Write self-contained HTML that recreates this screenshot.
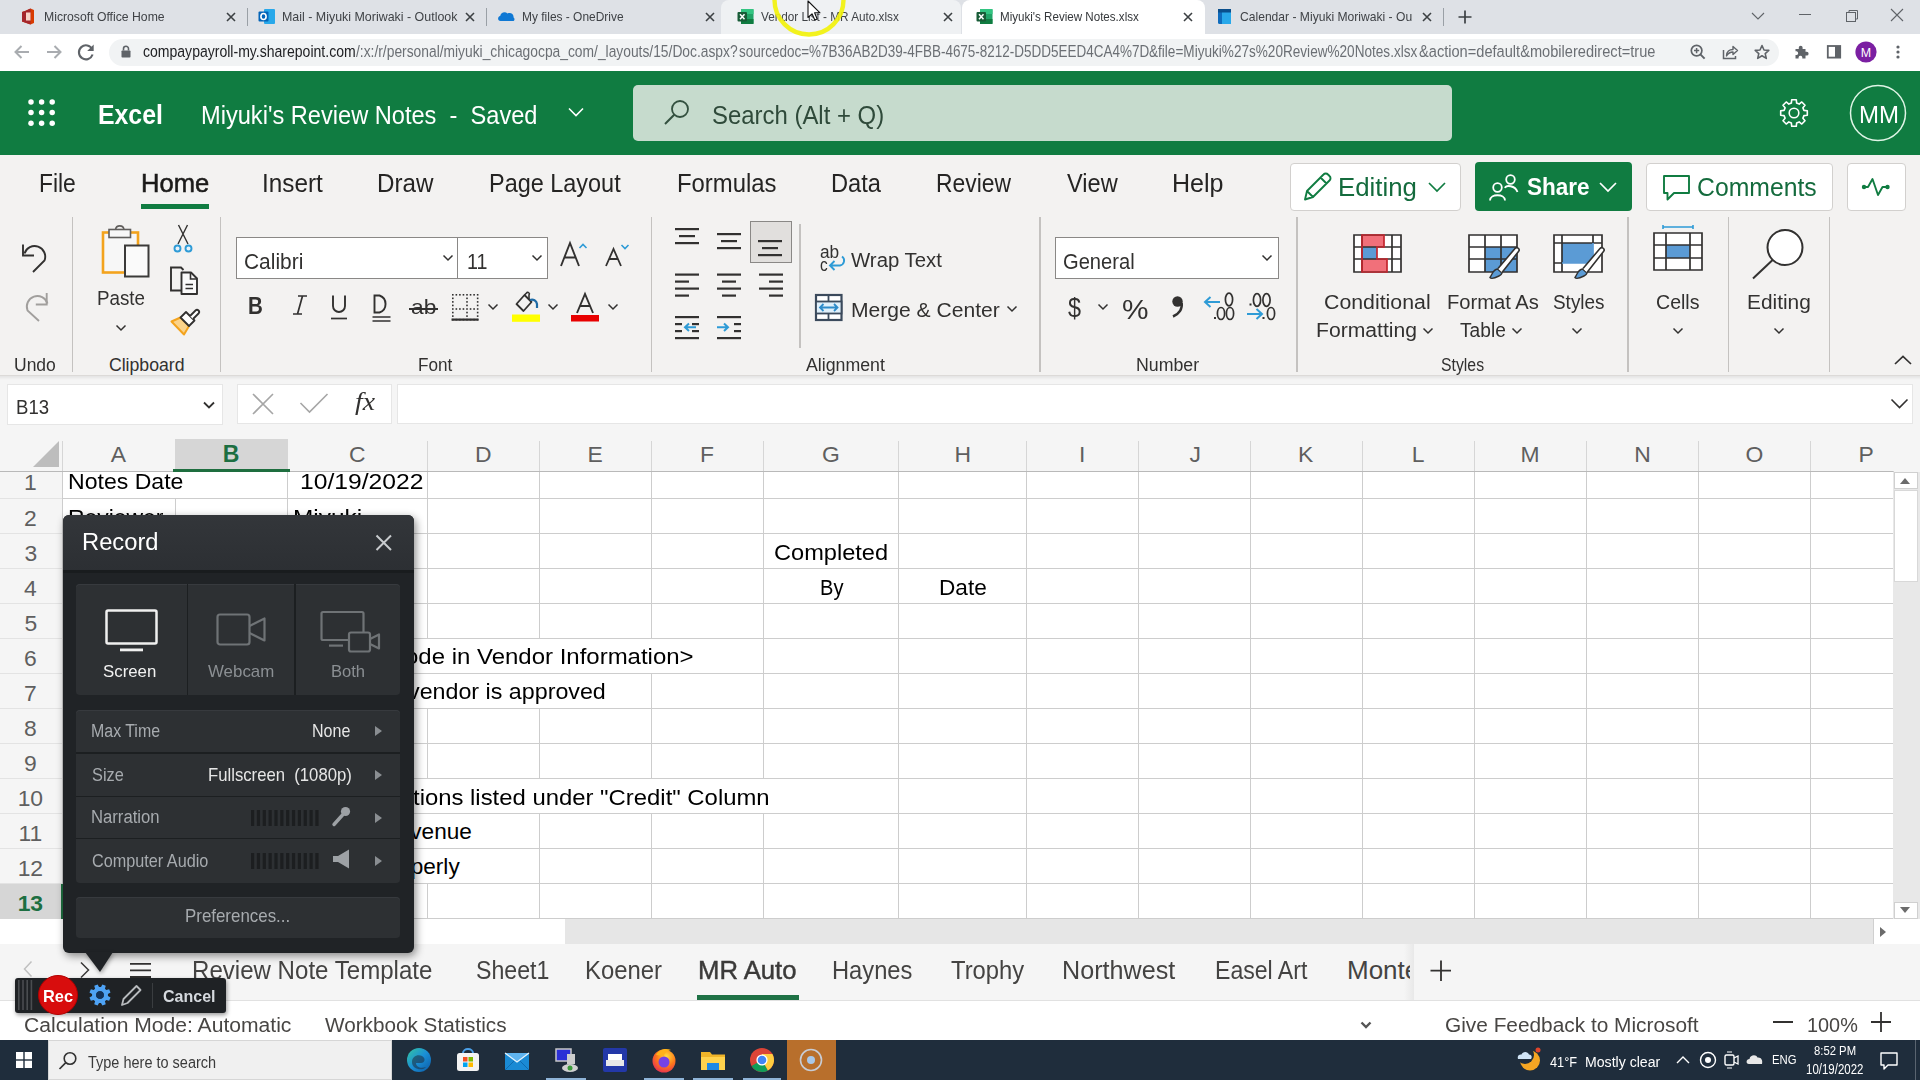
<!DOCTYPE html>
<html><head><meta charset="utf-8"><style>
html,body{margin:0;padding:0;width:1920px;height:1080px;overflow:hidden;background:#fff;font-family:"Liberation Sans",sans-serif;}
.a{position:absolute;}
.t{position:absolute;white-space:nowrap;line-height:1;transform-origin:0 0;font-family:"Liberation Sans",sans-serif;z-index:2;}
svg{position:absolute;overflow:visible;}

</style></head><body>
<div class="a" style="left:0px;top:0px;width:1920px;height:34px;background:#dee1e6;"></div>
<div class="a" style="left:721px;top:0;width:240px;height:34px;background:#eff1f3;border-radius:8px 8px 0 0"></div>
<div class="a" style="left:962px;top:0;width:243px;height:34px;background:#ffffff;border-radius:8px 8px 0 0"></div>
<div class="a" style="left:0px;top:34px;width:1920px;height:36.5px;background:#ffffff;"></div>
<div class="a" style="left:109px;top:38.5px;width:1670px;height:27px;background:#f1f3f4;border-radius:14px"></div>
<div class="a" style="left:0px;top:70.5px;width:1920px;height:84.5px;background:#107c41;"></div>
<div class="a" style="left:633px;top:85px;width:819px;height:55.5px;background:#c6dbcd;border-radius:5px"></div>
<div class="a" style="left:0px;top:155px;width:1920px;height:221px;background:#f3f2f1;"></div>
<div class="a" style="left:0px;top:376px;width:1920px;height:61px;background:#f5f5f5;"></div>
<div class="a" style="left:0px;top:375px;width:1920px;height:1px;background:#dcdad8;"></div>
<div class="a" style="left:0;top:376px;width:1920px;height:4px;background:linear-gradient(rgba(0,0,0,0.07),rgba(0,0,0,0))"></div>
<div class="a" style="left:7px;top:383.5px;width:216px;height:41px;background:#fff;border:1px solid #e6e6e6;box-sizing:border-box"></div>
<div class="a" style="left:237px;top:383.5px;width:154.5px;height:40.5px;background:#fff;border:1px solid #e6e6e6;box-sizing:border-box"></div>
<div class="a" style="left:397px;top:383.5px;width:1516px;height:40.5px;background:#fff;border:1px solid #e6e6e6;box-sizing:border-box"></div>
<div class="a" style="left:0px;top:437px;width:1920px;height:482px;background:#f5f5f5;"></div>
<div class="a" style="left:62px;top:471.5px;width:1831px;height:447px;background:#ffffff;"></div>
<svg style="left:0;top:0" width="1920" height="1080"><rect x="62" y="471" width="1831" height="1" fill="#cdcdcd"/><rect x="62" y="498" width="1831" height="1" fill="#cdcdcd"/><rect x="62" y="533" width="1831" height="1" fill="#cdcdcd"/><rect x="62" y="568" width="1831" height="1" fill="#cdcdcd"/><rect x="62" y="603" width="1831" height="1" fill="#cdcdcd"/><rect x="62" y="638" width="1831" height="1" fill="#cdcdcd"/><rect x="62" y="673" width="1831" height="1" fill="#cdcdcd"/><rect x="62" y="708" width="1831" height="1" fill="#cdcdcd"/><rect x="62" y="743" width="1831" height="1" fill="#cdcdcd"/><rect x="62" y="778" width="1831" height="1" fill="#cdcdcd"/><rect x="62" y="813" width="1831" height="1" fill="#cdcdcd"/><rect x="62" y="848" width="1831" height="1" fill="#cdcdcd"/><rect x="62" y="883" width="1831" height="1" fill="#cdcdcd"/><rect x="62" y="918" width="1831" height="1" fill="#cdcdcd"/><rect x="0" y="498" width="62" height="1" fill="#e3e3e3"/><rect x="0" y="533" width="62" height="1" fill="#e3e3e3"/><rect x="0" y="568" width="62" height="1" fill="#e3e3e3"/><rect x="0" y="603" width="62" height="1" fill="#e3e3e3"/><rect x="0" y="638" width="62" height="1" fill="#e3e3e3"/><rect x="0" y="673" width="62" height="1" fill="#e3e3e3"/><rect x="0" y="708" width="62" height="1" fill="#e3e3e3"/><rect x="0" y="743" width="62" height="1" fill="#e3e3e3"/><rect x="0" y="778" width="62" height="1" fill="#e3e3e3"/><rect x="0" y="813" width="62" height="1" fill="#e3e3e3"/><rect x="0" y="848" width="62" height="1" fill="#e3e3e3"/><rect x="0" y="883" width="62" height="1" fill="#e3e3e3"/><rect x="0" y="918" width="62" height="1" fill="#e3e3e3"/><rect x="62" y="471" width="1" height="27" fill="#cdcdcd"/><rect x="62" y="498" width="1" height="35" fill="#cdcdcd"/><rect x="62" y="533" width="1" height="35" fill="#cdcdcd"/><rect x="62" y="568" width="1" height="35" fill="#cdcdcd"/><rect x="62" y="603" width="1" height="35" fill="#cdcdcd"/><rect x="62" y="638" width="1" height="35" fill="#cdcdcd"/><rect x="62" y="673" width="1" height="35" fill="#cdcdcd"/><rect x="62" y="708" width="1" height="35" fill="#cdcdcd"/><rect x="62" y="743" width="1" height="35" fill="#cdcdcd"/><rect x="62" y="778" width="1" height="35" fill="#cdcdcd"/><rect x="62" y="813" width="1" height="35" fill="#cdcdcd"/><rect x="62" y="848" width="1" height="35" fill="#cdcdcd"/><rect x="62" y="883" width="1" height="35" fill="#cdcdcd"/><rect x="175" y="498" width="1" height="35" fill="#cdcdcd"/><rect x="175" y="533" width="1" height="35" fill="#cdcdcd"/><rect x="175" y="568" width="1" height="35" fill="#cdcdcd"/><rect x="175" y="603" width="1" height="35" fill="#cdcdcd"/><rect x="175" y="708" width="1" height="35" fill="#cdcdcd"/><rect x="175" y="743" width="1" height="35" fill="#cdcdcd"/><rect x="175" y="883" width="1" height="35" fill="#cdcdcd"/><rect x="287" y="471" width="1" height="27" fill="#cdcdcd"/><rect x="287" y="498" width="1" height="35" fill="#cdcdcd"/><rect x="287" y="533" width="1" height="35" fill="#cdcdcd"/><rect x="287" y="568" width="1" height="35" fill="#cdcdcd"/><rect x="287" y="603" width="1" height="35" fill="#cdcdcd"/><rect x="287" y="708" width="1" height="35" fill="#cdcdcd"/><rect x="287" y="743" width="1" height="35" fill="#cdcdcd"/><rect x="287" y="883" width="1" height="35" fill="#cdcdcd"/><rect x="427" y="471" width="1" height="27" fill="#cdcdcd"/><rect x="427" y="498" width="1" height="35" fill="#cdcdcd"/><rect x="427" y="533" width="1" height="35" fill="#cdcdcd"/><rect x="427" y="568" width="1" height="35" fill="#cdcdcd"/><rect x="427" y="603" width="1" height="35" fill="#cdcdcd"/><rect x="427" y="708" width="1" height="35" fill="#cdcdcd"/><rect x="427" y="743" width="1" height="35" fill="#cdcdcd"/><rect x="427" y="883" width="1" height="35" fill="#cdcdcd"/><rect x="539" y="471" width="1" height="27" fill="#cdcdcd"/><rect x="539" y="498" width="1" height="35" fill="#cdcdcd"/><rect x="539" y="533" width="1" height="35" fill="#cdcdcd"/><rect x="539" y="568" width="1" height="35" fill="#cdcdcd"/><rect x="539" y="603" width="1" height="35" fill="#cdcdcd"/><rect x="539" y="708" width="1" height="35" fill="#cdcdcd"/><rect x="539" y="743" width="1" height="35" fill="#cdcdcd"/><rect x="539" y="813" width="1" height="35" fill="#cdcdcd"/><rect x="539" y="848" width="1" height="35" fill="#cdcdcd"/><rect x="539" y="883" width="1" height="35" fill="#cdcdcd"/><rect x="651" y="471" width="1" height="27" fill="#cdcdcd"/><rect x="651" y="498" width="1" height="35" fill="#cdcdcd"/><rect x="651" y="533" width="1" height="35" fill="#cdcdcd"/><rect x="651" y="568" width="1" height="35" fill="#cdcdcd"/><rect x="651" y="603" width="1" height="35" fill="#cdcdcd"/><rect x="651" y="673" width="1" height="35" fill="#cdcdcd"/><rect x="651" y="708" width="1" height="35" fill="#cdcdcd"/><rect x="651" y="743" width="1" height="35" fill="#cdcdcd"/><rect x="651" y="813" width="1" height="35" fill="#cdcdcd"/><rect x="651" y="848" width="1" height="35" fill="#cdcdcd"/><rect x="651" y="883" width="1" height="35" fill="#cdcdcd"/><rect x="763" y="471" width="1" height="27" fill="#cdcdcd"/><rect x="763" y="498" width="1" height="35" fill="#cdcdcd"/><rect x="763" y="533" width="1" height="35" fill="#cdcdcd"/><rect x="763" y="568" width="1" height="35" fill="#cdcdcd"/><rect x="763" y="603" width="1" height="35" fill="#cdcdcd"/><rect x="763" y="638" width="1" height="35" fill="#cdcdcd"/><rect x="763" y="673" width="1" height="35" fill="#cdcdcd"/><rect x="763" y="708" width="1" height="35" fill="#cdcdcd"/><rect x="763" y="743" width="1" height="35" fill="#cdcdcd"/><rect x="763" y="813" width="1" height="35" fill="#cdcdcd"/><rect x="763" y="848" width="1" height="35" fill="#cdcdcd"/><rect x="763" y="883" width="1" height="35" fill="#cdcdcd"/><rect x="898" y="471" width="1" height="27" fill="#cdcdcd"/><rect x="898" y="498" width="1" height="35" fill="#cdcdcd"/><rect x="898" y="533" width="1" height="35" fill="#cdcdcd"/><rect x="898" y="568" width="1" height="35" fill="#cdcdcd"/><rect x="898" y="603" width="1" height="35" fill="#cdcdcd"/><rect x="898" y="638" width="1" height="35" fill="#cdcdcd"/><rect x="898" y="673" width="1" height="35" fill="#cdcdcd"/><rect x="898" y="708" width="1" height="35" fill="#cdcdcd"/><rect x="898" y="743" width="1" height="35" fill="#cdcdcd"/><rect x="898" y="778" width="1" height="35" fill="#cdcdcd"/><rect x="898" y="813" width="1" height="35" fill="#cdcdcd"/><rect x="898" y="848" width="1" height="35" fill="#cdcdcd"/><rect x="898" y="883" width="1" height="35" fill="#cdcdcd"/><rect x="1026" y="471" width="1" height="27" fill="#cdcdcd"/><rect x="1026" y="498" width="1" height="35" fill="#cdcdcd"/><rect x="1026" y="533" width="1" height="35" fill="#cdcdcd"/><rect x="1026" y="568" width="1" height="35" fill="#cdcdcd"/><rect x="1026" y="603" width="1" height="35" fill="#cdcdcd"/><rect x="1026" y="638" width="1" height="35" fill="#cdcdcd"/><rect x="1026" y="673" width="1" height="35" fill="#cdcdcd"/><rect x="1026" y="708" width="1" height="35" fill="#cdcdcd"/><rect x="1026" y="743" width="1" height="35" fill="#cdcdcd"/><rect x="1026" y="778" width="1" height="35" fill="#cdcdcd"/><rect x="1026" y="813" width="1" height="35" fill="#cdcdcd"/><rect x="1026" y="848" width="1" height="35" fill="#cdcdcd"/><rect x="1026" y="883" width="1" height="35" fill="#cdcdcd"/><rect x="1138" y="471" width="1" height="27" fill="#cdcdcd"/><rect x="1138" y="498" width="1" height="35" fill="#cdcdcd"/><rect x="1138" y="533" width="1" height="35" fill="#cdcdcd"/><rect x="1138" y="568" width="1" height="35" fill="#cdcdcd"/><rect x="1138" y="603" width="1" height="35" fill="#cdcdcd"/><rect x="1138" y="638" width="1" height="35" fill="#cdcdcd"/><rect x="1138" y="673" width="1" height="35" fill="#cdcdcd"/><rect x="1138" y="708" width="1" height="35" fill="#cdcdcd"/><rect x="1138" y="743" width="1" height="35" fill="#cdcdcd"/><rect x="1138" y="778" width="1" height="35" fill="#cdcdcd"/><rect x="1138" y="813" width="1" height="35" fill="#cdcdcd"/><rect x="1138" y="848" width="1" height="35" fill="#cdcdcd"/><rect x="1138" y="883" width="1" height="35" fill="#cdcdcd"/><rect x="1250" y="471" width="1" height="27" fill="#cdcdcd"/><rect x="1250" y="498" width="1" height="35" fill="#cdcdcd"/><rect x="1250" y="533" width="1" height="35" fill="#cdcdcd"/><rect x="1250" y="568" width="1" height="35" fill="#cdcdcd"/><rect x="1250" y="603" width="1" height="35" fill="#cdcdcd"/><rect x="1250" y="638" width="1" height="35" fill="#cdcdcd"/><rect x="1250" y="673" width="1" height="35" fill="#cdcdcd"/><rect x="1250" y="708" width="1" height="35" fill="#cdcdcd"/><rect x="1250" y="743" width="1" height="35" fill="#cdcdcd"/><rect x="1250" y="778" width="1" height="35" fill="#cdcdcd"/><rect x="1250" y="813" width="1" height="35" fill="#cdcdcd"/><rect x="1250" y="848" width="1" height="35" fill="#cdcdcd"/><rect x="1250" y="883" width="1" height="35" fill="#cdcdcd"/><rect x="1362" y="471" width="1" height="27" fill="#cdcdcd"/><rect x="1362" y="498" width="1" height="35" fill="#cdcdcd"/><rect x="1362" y="533" width="1" height="35" fill="#cdcdcd"/><rect x="1362" y="568" width="1" height="35" fill="#cdcdcd"/><rect x="1362" y="603" width="1" height="35" fill="#cdcdcd"/><rect x="1362" y="638" width="1" height="35" fill="#cdcdcd"/><rect x="1362" y="673" width="1" height="35" fill="#cdcdcd"/><rect x="1362" y="708" width="1" height="35" fill="#cdcdcd"/><rect x="1362" y="743" width="1" height="35" fill="#cdcdcd"/><rect x="1362" y="778" width="1" height="35" fill="#cdcdcd"/><rect x="1362" y="813" width="1" height="35" fill="#cdcdcd"/><rect x="1362" y="848" width="1" height="35" fill="#cdcdcd"/><rect x="1362" y="883" width="1" height="35" fill="#cdcdcd"/><rect x="1474" y="471" width="1" height="27" fill="#cdcdcd"/><rect x="1474" y="498" width="1" height="35" fill="#cdcdcd"/><rect x="1474" y="533" width="1" height="35" fill="#cdcdcd"/><rect x="1474" y="568" width="1" height="35" fill="#cdcdcd"/><rect x="1474" y="603" width="1" height="35" fill="#cdcdcd"/><rect x="1474" y="638" width="1" height="35" fill="#cdcdcd"/><rect x="1474" y="673" width="1" height="35" fill="#cdcdcd"/><rect x="1474" y="708" width="1" height="35" fill="#cdcdcd"/><rect x="1474" y="743" width="1" height="35" fill="#cdcdcd"/><rect x="1474" y="778" width="1" height="35" fill="#cdcdcd"/><rect x="1474" y="813" width="1" height="35" fill="#cdcdcd"/><rect x="1474" y="848" width="1" height="35" fill="#cdcdcd"/><rect x="1474" y="883" width="1" height="35" fill="#cdcdcd"/><rect x="1586" y="471" width="1" height="27" fill="#cdcdcd"/><rect x="1586" y="498" width="1" height="35" fill="#cdcdcd"/><rect x="1586" y="533" width="1" height="35" fill="#cdcdcd"/><rect x="1586" y="568" width="1" height="35" fill="#cdcdcd"/><rect x="1586" y="603" width="1" height="35" fill="#cdcdcd"/><rect x="1586" y="638" width="1" height="35" fill="#cdcdcd"/><rect x="1586" y="673" width="1" height="35" fill="#cdcdcd"/><rect x="1586" y="708" width="1" height="35" fill="#cdcdcd"/><rect x="1586" y="743" width="1" height="35" fill="#cdcdcd"/><rect x="1586" y="778" width="1" height="35" fill="#cdcdcd"/><rect x="1586" y="813" width="1" height="35" fill="#cdcdcd"/><rect x="1586" y="848" width="1" height="35" fill="#cdcdcd"/><rect x="1586" y="883" width="1" height="35" fill="#cdcdcd"/><rect x="1698" y="471" width="1" height="27" fill="#cdcdcd"/><rect x="1698" y="498" width="1" height="35" fill="#cdcdcd"/><rect x="1698" y="533" width="1" height="35" fill="#cdcdcd"/><rect x="1698" y="568" width="1" height="35" fill="#cdcdcd"/><rect x="1698" y="603" width="1" height="35" fill="#cdcdcd"/><rect x="1698" y="638" width="1" height="35" fill="#cdcdcd"/><rect x="1698" y="673" width="1" height="35" fill="#cdcdcd"/><rect x="1698" y="708" width="1" height="35" fill="#cdcdcd"/><rect x="1698" y="743" width="1" height="35" fill="#cdcdcd"/><rect x="1698" y="778" width="1" height="35" fill="#cdcdcd"/><rect x="1698" y="813" width="1" height="35" fill="#cdcdcd"/><rect x="1698" y="848" width="1" height="35" fill="#cdcdcd"/><rect x="1698" y="883" width="1" height="35" fill="#cdcdcd"/><rect x="1810" y="471" width="1" height="27" fill="#cdcdcd"/><rect x="1810" y="498" width="1" height="35" fill="#cdcdcd"/><rect x="1810" y="533" width="1" height="35" fill="#cdcdcd"/><rect x="1810" y="568" width="1" height="35" fill="#cdcdcd"/><rect x="1810" y="603" width="1" height="35" fill="#cdcdcd"/><rect x="1810" y="638" width="1" height="35" fill="#cdcdcd"/><rect x="1810" y="673" width="1" height="35" fill="#cdcdcd"/><rect x="1810" y="708" width="1" height="35" fill="#cdcdcd"/><rect x="1810" y="743" width="1" height="35" fill="#cdcdcd"/><rect x="1810" y="778" width="1" height="35" fill="#cdcdcd"/><rect x="1810" y="813" width="1" height="35" fill="#cdcdcd"/><rect x="1810" y="848" width="1" height="35" fill="#cdcdcd"/><rect x="1810" y="883" width="1" height="35" fill="#cdcdcd"/><rect x="1893" y="471" width="1" height="27" fill="#cdcdcd"/><rect x="1893" y="498" width="1" height="35" fill="#cdcdcd"/><rect x="1893" y="533" width="1" height="35" fill="#cdcdcd"/><rect x="1893" y="568" width="1" height="35" fill="#cdcdcd"/><rect x="1893" y="603" width="1" height="35" fill="#cdcdcd"/><rect x="1893" y="638" width="1" height="35" fill="#cdcdcd"/><rect x="1893" y="673" width="1" height="35" fill="#cdcdcd"/><rect x="1893" y="708" width="1" height="35" fill="#cdcdcd"/><rect x="1893" y="743" width="1" height="35" fill="#cdcdcd"/><rect x="1893" y="778" width="1" height="35" fill="#cdcdcd"/><rect x="1893" y="813" width="1" height="35" fill="#cdcdcd"/><rect x="1893" y="848" width="1" height="35" fill="#cdcdcd"/><rect x="1893" y="883" width="1" height="35" fill="#cdcdcd"/><rect x="62" y="441" width="1" height="30" fill="#d6d6d6"/><rect x="175" y="441" width="1" height="30" fill="#d6d6d6"/><rect x="287" y="441" width="1" height="30" fill="#d6d6d6"/><rect x="427" y="441" width="1" height="30" fill="#d6d6d6"/><rect x="539" y="441" width="1" height="30" fill="#d6d6d6"/><rect x="651" y="441" width="1" height="30" fill="#d6d6d6"/><rect x="763" y="441" width="1" height="30" fill="#d6d6d6"/><rect x="898" y="441" width="1" height="30" fill="#d6d6d6"/><rect x="1026" y="441" width="1" height="30" fill="#d6d6d6"/><rect x="1138" y="441" width="1" height="30" fill="#d6d6d6"/><rect x="1250" y="441" width="1" height="30" fill="#d6d6d6"/><rect x="1362" y="441" width="1" height="30" fill="#d6d6d6"/><rect x="1474" y="441" width="1" height="30" fill="#d6d6d6"/><rect x="1586" y="441" width="1" height="30" fill="#d6d6d6"/><rect x="1698" y="441" width="1" height="30" fill="#d6d6d6"/><rect x="1810" y="441" width="1" height="30" fill="#d6d6d6"/></svg>
<div class="a" style="left:0px;top:471px;width:1893px;height:1.3px;background:#b9b9b9;"></div>
<svg style="left:30px;top:438px;" width="32" height="32" viewBox="0 0 32 32"><path d="M3 29 L29 3 L29 29 Z" fill="#bdbdbd"/></svg>
<div class="a" style="left:175px;top:439px;width:112.5px;height:32.5px;background:#d6d6d6;"></div>
<div class="a" style="left:173px;top:469px;width:117px;height:3px;background:#1e6e3f;"></div>
<div class="a" style="left:0px;top:883.5px;width:62px;height:35px;background:#d6d6d6;"></div>
<div class="a" style="left:60.5px;top:883.5px;width:3px;height:35px;background:#1e6e3f;"></div>
<div class="a" style="left:1893px;top:471.5px;width:27px;height:447px;background:#e8e8e8;"></div>
<div class="a" style="left:1893.5px;top:472px;width:24px;height:17px;background:#fff;border:1px solid #d0d0d0;box-sizing:border-box"></div>
<svg style="left:1897px;top:474px;" width="16" height="12" viewBox="0 0 16 12"><path d="M3 10 L8 4 L13 10 Z" fill="#6b6b6b"/></svg>
<div class="a" style="left:1893.5px;top:490px;width:24px;height:92px;background:#fff;border:1px solid #d8d8d8;box-sizing:border-box"></div>
<div class="a" style="left:1893.5px;top:902px;width:24px;height:17px;background:#fff;border:1px solid #d0d0d0;box-sizing:border-box"></div>
<svg style="left:1897px;top:904px;" width="16" height="12" viewBox="0 0 16 12"><path d="M3 3 L13 3 L8 9 Z" fill="#6b6b6b"/></svg>
<div class="a" style="left:0px;top:919px;width:1920px;height:25px;background:#ffffff;"></div>
<div class="a" style="left:565px;top:919px;width:1318px;height:25px;background:#e6e6e6;"></div>
<div class="a" style="left:1873px;top:919px;width:19px;height:25px;background:#fff;border-left:1px solid #d0d0d0;box-sizing:border-box"></div>
<svg style="left:1876px;top:925px;" width="14" height="14" viewBox="0 0 14 14"><path d="M4 2 L10 7 L4 12 Z" fill="#6b6b6b"/></svg>
<div class="a" style="left:0px;top:944px;width:1920px;height:56px;background:#f5f5f5;"></div>
<div class="a" style="left:0px;top:1000px;width:1920px;height:1px;background:#e1e1e1;"></div>
<div class="a" style="left:697px;top:995px;width:102px;height:5px;background:#1e7145;"></div>
<div class="a" style="left:1404px;top:944px;width:10px;height:56px;background:linear-gradient(90deg,rgba(245,245,245,0),#e8e8e8)"></div>
<div class="a" style="left:0px;top:1001px;width:1920px;height:39px;background:#ffffff;"></div>
<div class="a" style="left:0px;top:1040px;width:1920px;height:40px;background:#1f2d3c;"></div>
<div class="a" style="left:48px;top:1040px;width:344px;height:40px;background:#f0f0f0;border:1px solid #d6d6d6;box-sizing:border-box"></div>
<div class="a" style="left:787px;top:1040px;width:49px;height:40px;background:#b86f2c;"></div>
<div class="a" style="z-index:20;left:63px;top:514.5px;width:351px;height:438px;background:#202326;border-radius:6px;box-shadow:2px 3px 8px rgba(0,0,0,0.45);overflow:hidden">
 <div class="a" style="left:0;top:0;width:351px;height:56px;background:linear-gradient(#33363a,#2c2f33);"></div>
 <div class="a" style="left:0;top:55.5px;width:351px;height:2.5px;background:#191c1e;"></div>
 <div class="a" style="left:13px;top:69.5px;width:324px;height:110.5px;background:#2d3033;border-radius:4px;box-shadow:inset 0 1px 0 #373a3e;"></div>
 <div class="a" style="left:123.5px;top:69.5px;width:1.5px;height:110.5px;background:#1c1f21;"></div>
 <div class="a" style="left:231px;top:69.5px;width:1.5px;height:110.5px;background:#1c1f21;"></div>
 <div class="a" style="left:13px;top:195.5px;width:324px;height:172.5px;background:#2d3033;border-radius:4px;box-shadow:inset 0 1px 0 #373a3e;"></div>
 <div class="a" style="left:13px;top:237.5px;width:324px;height:1.5px;background:#1c1f21;"></div>
 <div class="a" style="left:13px;top:281px;width:324px;height:1.5px;background:#1c1f21;"></div>
 <div class="a" style="left:13px;top:323px;width:324px;height:1.5px;background:#1c1f21;"></div>
 <div class="a" style="left:13px;top:382.5px;width:324px;height:40.5px;background:#2d3033;border-radius:4px;box-shadow:inset 0 1px 0 #373a3e;"></div>
</div>
<svg style="left:80px;top:951px;z-index:20;filter:drop-shadow(1px 2px 2px rgba(0,0,0,0.35))" width="40" height="24" viewBox="0 0 40 24"><path d="M5 1 L33 1 L20 21 Z" fill="#202326"/></svg>
<svg style="left:374px;top:533px;z-index:22" width="20" height="20" viewBox="0 0 20 20"><path d="M2.5 2.5 L17 17 M17 2.5 L2.5 17" stroke="#c8cbce" stroke-width="2"/></svg>
<svg style="left:100px;top:605px;z-index:22" width="64" height="50" viewBox="0 0 64 50"><rect x="6.5" y="5.5" width="50" height="33" rx="1.5" fill="none" stroke="#f0f0f0" stroke-width="2.5"/><rect x="20" y="43.5" width="23" height="2.8" fill="#f0f0f0"/></svg>
<svg style="left:210px;top:605px;z-index:22" width="64" height="50" viewBox="0 0 64 50"><rect x="7.5" y="9.5" width="32" height="30" rx="2.5" fill="none" stroke="#6f7376" stroke-width="2.2"/><path d="M39.5 21 L54.5 13.5 L54.5 35.5 L39.5 28" fill="none" stroke="#6f7376" stroke-width="2.2" stroke-linejoin="round"/></svg>
<svg style="left:315px;top:605px;z-index:22" width="70" height="52" viewBox="0 0 70 52"><rect x="6.5" y="7" width="42" height="28" rx="1.5" fill="none" stroke="#6f7376" stroke-width="2.2"/><rect x="14" y="39.5" width="14" height="2.2" fill="#6f7376"/><rect x="34" y="27.5" width="21" height="19" rx="2" fill="#2d3033" stroke="#6f7376" stroke-width="2.2"/><path d="M55 34 L64 29.5 L64 43.5 L55 39" fill="none" stroke="#6f7376" stroke-width="2.2" stroke-linejoin="round"/></svg>
<svg style="left:372px;top:723px;z-index:22" width="14" height="16" viewBox="0 0 14 16"><path d="M3 3 L10 8 L3 13 Z" fill="#8a8e92"/></svg>
<svg style="left:372px;top:767px;z-index:22" width="14" height="16" viewBox="0 0 14 16"><path d="M3 3 L10 8 L3 13 Z" fill="#8a8e92"/></svg>
<svg style="left:372px;top:810px;z-index:22" width="14" height="16" viewBox="0 0 14 16"><path d="M3 3 L10 8 L3 13 Z" fill="#8a8e92"/></svg>
<svg style="left:372px;top:853px;z-index:22" width="14" height="16" viewBox="0 0 14 16"><path d="M3 3 L10 8 L3 13 Z" fill="#8a8e92"/></svg>
<svg style="left:250.5px;top:809.5px;z-index:22" width="72" height="16" viewBox="0 0 72 16"><rect x="0.00" y="0" width="3.2" height="16" fill="#1c1e20"/><rect x="5.85" y="0" width="3.2" height="16" fill="#1c1e20"/><rect x="11.70" y="0" width="3.2" height="16" fill="#1c1e20"/><rect x="17.55" y="0" width="3.2" height="16" fill="#1c1e20"/><rect x="23.40" y="0" width="3.2" height="16" fill="#1c1e20"/><rect x="29.25" y="0" width="3.2" height="16" fill="#1c1e20"/><rect x="35.10" y="0" width="3.2" height="16" fill="#1c1e20"/><rect x="40.95" y="0" width="3.2" height="16" fill="#1c1e20"/><rect x="46.80" y="0" width="3.2" height="16" fill="#1c1e20"/><rect x="52.65" y="0" width="3.2" height="16" fill="#1c1e20"/><rect x="58.50" y="0" width="3.2" height="16" fill="#1c1e20"/><rect x="64.35" y="0" width="3.2" height="16" fill="#1c1e20"/></svg>
<svg style="left:250.5px;top:852.5px;z-index:22" width="72" height="16" viewBox="0 0 72 16"><rect x="0.00" y="0" width="3.2" height="16" fill="#1c1e20"/><rect x="5.85" y="0" width="3.2" height="16" fill="#1c1e20"/><rect x="11.70" y="0" width="3.2" height="16" fill="#1c1e20"/><rect x="17.55" y="0" width="3.2" height="16" fill="#1c1e20"/><rect x="23.40" y="0" width="3.2" height="16" fill="#1c1e20"/><rect x="29.25" y="0" width="3.2" height="16" fill="#1c1e20"/><rect x="35.10" y="0" width="3.2" height="16" fill="#1c1e20"/><rect x="40.95" y="0" width="3.2" height="16" fill="#1c1e20"/><rect x="46.80" y="0" width="3.2" height="16" fill="#1c1e20"/><rect x="52.65" y="0" width="3.2" height="16" fill="#1c1e20"/><rect x="58.50" y="0" width="3.2" height="16" fill="#1c1e20"/><rect x="64.35" y="0" width="3.2" height="16" fill="#1c1e20"/></svg>
<svg style="left:330px;top:805px;z-index:22" width="24" height="24" viewBox="0 0 24 24"><circle cx="15.5" cy="6.5" r="4.6" fill="#9da1a5"/><path d="M12.5 10 L4 19.5" stroke="#9da1a5" stroke-width="3.4" stroke-linecap="round"/></svg>
<svg style="left:330px;top:848px;z-index:22" width="24" height="24" viewBox="0 0 24 24"><path d="M3 8 L8 8 L19 1.5 L19 20.5 L8 14 L3 14 Z" fill="#9da1a5"/></svg>
<div class="a" style="z-index:30;left:15px;top:978px;width:210.5px;height:34.5px;background:#1f2225;border-radius:3px;box-shadow:1px 2px 4px rgba(0,0,0,0.4)"></div>
<svg style="left:15px;top:978px;z-index:31" width="20" height="34" viewBox="0 0 20 34"><rect x="3.0" y="2" width="1.6" height="30" fill="#4a4d50"/><rect x="7.2" y="2" width="1.6" height="30" fill="#4a4d50"/><rect x="11.4" y="2" width="1.6" height="30" fill="#4a4d50"/><rect x="15.6" y="2" width="1.6" height="30" fill="#4a4d50"/></svg>
<svg style="left:36px;top:973px;z-index:31" width="44" height="44" viewBox="0 0 44 44"><circle cx="22" cy="22" r="19.5" fill="#d80d0d"/><circle cx="22" cy="22" r="19.5" fill="none" stroke="#b30000" stroke-width="1"/></svg>
<svg style="left:88px;top:983px;z-index:31" width="24" height="24" viewBox="0 0 24 24"><path d="M19.94 12.98 L22.53 14.39 L21.13 17.76 L18.31 16.92 L16.92 18.31 L17.76 21.13 L14.39 22.53 L12.98 19.94 L11.02 19.94 L9.61 22.53 L6.24 21.13 L7.08 18.31 L5.69 16.92 L2.87 17.76 L1.47 14.39 L4.06 12.98 L4.06 11.02 L1.47 9.61 L2.87 6.24 L5.69 7.08 L7.08 5.69 L6.24 2.87 L9.61 1.47 L11.02 4.06 L12.98 4.06 L14.39 1.47 L17.76 2.87 L16.92 5.69 L18.31 7.08 L21.13 6.24 L22.53 9.61 L19.94 11.02 Z M12 8.2 A3.8 3.8 0 1 0 12 15.8 A3.8 3.8 0 1 0 12 8.2 Z" fill="#4ea3f5" fill-rule="evenodd"/><circle cx="12" cy="12" r="3.8" fill="#12335c"/></svg>
<svg style="left:118px;top:983px;z-index:31" width="26" height="26" viewBox="0 0 26 26"><path d="M4 22 L5.5 16 L18.5 3 L22.5 7 L9.5 20 Z" fill="none" stroke="#b8bbbe" stroke-width="1.8" stroke-linejoin="round"/></svg>
<div class="a" style="left:152px;top:983px;width:1px;height:25px;background:#3a3d40;z-index:31;"></div>
<svg style="left:21px;top:8px;" width="14" height="17" viewBox="0 0 14 17"><path d="M4 3 L9.5 0.5 L13 2 L13 15 L9.5 16.5 L1 13.5 L1 4 Z" fill="#d83b01"/><path d="M4 3 L9.5 0.5 L9.5 16.5 L1 13.5 L1 4 Z" fill="#a4262c"/><rect x="5" y="4.5" width="4.5" height="8" fill="#f7d4c9"/></svg>
<svg style="left:258px;top:8px;" width="18" height="17" viewBox="0 0 18 17"><rect x="6" y="1" width="11" height="15" rx="1" fill="#28a8ea"/><rect x="0.5" y="3.5" width="10" height="10" rx="1" fill="#0364b8"/><ellipse cx="5.5" cy="8.5" rx="2.6" ry="3" fill="none" stroke="#fff" stroke-width="1.6"/></svg>
<svg style="left:497px;top:9px;" width="18" height="14" viewBox="0 0 18 14"><path d="M3.5 12 C0.5 12 0.2 7.5 3.2 7 C3.6 3.5 8 2 10.5 4.5 C13.5 3 17 5 16.5 8.5 C18 9 17.8 12 16 12 Z" fill="#0f78d4"/></svg>
<svg style="left:737px;top:8px;" width="17" height="17" viewBox="0 0 17 17"><rect x="4" y="1" width="12.5" height="15" rx="1" fill="#21a366"/><rect x="4" y="1" width="12.5" height="5" fill="#33c481"/><rect x="4" y="11" width="12.5" height="5" fill="#107c41"/><rect x="0.5" y="4" width="9.5" height="9.5" rx="1" fill="#185c37"/><path d="M3 6.2 L7.5 11.3 M7.5 6.2 L3 11.3" stroke="#fff" stroke-width="1.5"/></svg>
<svg style="left:976px;top:8px;" width="17" height="17" viewBox="0 0 17 17"><rect x="4" y="1" width="12.5" height="15" rx="1" fill="#21a366"/><rect x="4" y="1" width="12.5" height="5" fill="#33c481"/><rect x="4" y="11" width="12.5" height="5" fill="#107c41"/><rect x="0.5" y="4" width="9.5" height="9.5" rx="1" fill="#185c37"/><path d="M3 6.2 L7.5 11.3 M7.5 6.2 L3 11.3" stroke="#fff" stroke-width="1.5"/></svg>
<svg style="left:1216px;top:8px;" width="16" height="17" viewBox="0 0 16 17"><rect x="2" y="1" width="13" height="15" rx="1.5" fill="#0f6cbd"/><rect x="6" y="4" width="9" height="12" fill="#28a8ea"/><rect x="2" y="1" width="13" height="3.5" fill="#0a4f8c"/></svg>
<svg style="left:225px;top:11px;" width="12" height="12" viewBox="0 0 12 12"><path d="M2 2 L10 10 M10 2 L2 10" stroke="#3c4043" stroke-width="1.6"/></svg>
<svg style="left:464px;top:11px;" width="12" height="12" viewBox="0 0 12 12"><path d="M2 2 L10 10 M10 2 L2 10" stroke="#3c4043" stroke-width="1.6"/></svg>
<svg style="left:703.5px;top:11px;" width="12" height="12" viewBox="0 0 12 12"><path d="M2 2 L10 10 M10 2 L2 10" stroke="#3c4043" stroke-width="1.6"/></svg>
<svg style="left:942px;top:11px;" width="12" height="12" viewBox="0 0 12 12"><path d="M2 2 L10 10 M10 2 L2 10" stroke="#3c4043" stroke-width="1.6"/></svg>
<svg style="left:1181.5px;top:11px;" width="12" height="12" viewBox="0 0 12 12"><path d="M2 2 L10 10 M10 2 L2 10" stroke="#3c4043" stroke-width="1.6"/></svg>
<svg style="left:1421px;top:11px;" width="12" height="12" viewBox="0 0 12 12"><path d="M2 2 L10 10 M10 2 L2 10" stroke="#3c4043" stroke-width="1.6"/></svg>
<div class="a" style="left:247px;top:8px;width:1px;height:18px;background:#9aa0a6;"></div>
<div class="a" style="left:486px;top:8px;width:1px;height:18px;background:#9aa0a6;"></div>
<div class="a" style="left:1443px;top:8px;width:1px;height:18px;background:#9aa0a6;"></div>
<svg style="left:1457px;top:9px;" width="16" height="16" viewBox="0 0 16 16"><path d="M8 1.5 L8 14.5 M1.5 8 L14.5 8" stroke="#3c4043" stroke-width="1.7"/></svg>
<svg style="left:1750px;top:9px;" width="16" height="14" viewBox="0 0 16 14"><path d="M2 4 L8 10 L14 4" fill="none" stroke="#5f6368" stroke-width="1.1"/></svg>
<div class="a" style="left:1799px;top:14px;width:12px;height:1px;background:#5f6368;"></div>
<svg style="left:1844px;top:8px;" width="16" height="16" viewBox="0 0 16 16"><rect x="2.5" y="4.5" width="9" height="9" fill="none" stroke="#5f6368" stroke-width="1"/><path d="M5 4.5 L5 2.5 L13.5 2.5 L13.5 11 L11.5 11" fill="none" stroke="#5f6368" stroke-width="1"/></svg>
<svg style="left:1889px;top:7px;" width="16" height="16" viewBox="0 0 16 16"><path d="M2 2 L14 14 M14 2 L2 14" stroke="#5f6368" stroke-width="1.1"/></svg>
<svg style="left:12px;top:42px;" width="20" height="20" viewBox="0 0 20 20"><path d="M17 10 L3.5 10 M9.5 4 L3.5 10 L9.5 16" fill="none" stroke="#a9acb0" stroke-width="2"/></svg>
<svg style="left:44px;top:42px;" width="20" height="20" viewBox="0 0 20 20"><path d="M3 10 L16.5 10 M10.5 4 L16.5 10 L10.5 16" fill="none" stroke="#a9acb0" stroke-width="2"/></svg>
<svg style="left:75px;top:41px;" width="22" height="22" viewBox="0 0 22 22"><path d="M17.2 8.2 A7 7 0 1 0 17.6 13.5" fill="none" stroke="#5f6368" stroke-width="2.1"/><path d="M18.7 3.5 L18.7 10 L12.2 10 Z" fill="#5f6368"/></svg>
<svg style="left:118px;top:44px;" width="16" height="17" viewBox="0 0 16 17"><rect x="3.5" y="6.5" width="9" height="7" rx="0.8" fill="#5f6368"/><path d="M5.5 6.5 L5.5 4.8 A2.5 2.5 0 0 1 10.5 4.8 L10.5 6.5" fill="none" stroke="#5f6368" stroke-width="1.6"/></svg>
<svg style="left:1689px;top:43px;" width="18" height="18" viewBox="0 0 18 18"><circle cx="7.6" cy="7.6" r="5.3" fill="none" stroke="#5f6368" stroke-width="1.7"/><path d="M11.4 11.4 L15.6 15.6" stroke="#5f6368" stroke-width="2"/><path d="M7.6 5 L7.6 10.2 M5 7.6 L10.2 7.6" stroke="#5f6368" stroke-width="1.5"/></svg>
<svg style="left:1721px;top:44px;" width="20" height="17" viewBox="0 0 20 17"><path d="M2.5 6 L2.5 14.5 L14.5 14.5 L14.5 12" fill="none" stroke="#5f6368" stroke-width="1.5"/><path d="M5.5 12 C5.5 7.5 8.5 5.5 12 5.5 L12 2.5 L16.5 6.5 L12 10.5 L12 8 C9 8 7 9.5 5.5 12 Z" fill="none" stroke="#5f6368" stroke-width="1.4" stroke-linejoin="round"/></svg>
<svg style="left:1754px;top:44px;" width="16" height="16" viewBox="0 0 16 16"><path d="M8 1.5 L10 6 L14.8 6.4 L11.2 9.6 L12.3 14.4 L8 11.8 L3.7 14.4 L4.8 9.6 L1.2 6.4 L6 6 Z" fill="none" stroke="#5f6368" stroke-width="1.6" stroke-linejoin="round"/></svg>
<svg style="left:1794px;top:44px;" width="17" height="16" viewBox="0 0 17 16"><path d="M1.5 5 L4.8 5 L4.8 3.6 A1.9 1.9 0 0 1 8.6 3.6 L8.6 5 L11.5 5 L11.5 7.8 L12.7 7.8 A1.9 1.9 0 0 1 12.7 11.6 L11.5 11.6 L11.5 14.5 L8.3 14.5 L8.3 13.3 A1.9 1.9 0 0 0 4.6 13.3 L4.6 14.5 L1.5 14.5 L1.5 11 L2.7 11 A1.9 1.9 0 0 0 2.7 7.3 L1.5 7.3 Z" fill="#5f6368"/></svg>
<svg style="left:1826px;top:44px;" width="16" height="16" viewBox="0 0 16 16"><rect x="1.8" y="2" width="12.4" height="11.6" fill="none" stroke="#5f6368" stroke-width="1.8"/><rect x="9" y="2" width="5.2" height="11.6" fill="#5f6368"/></svg>
<svg style="left:1855px;top:41px;" width="22" height="22" viewBox="0 0 22 22"><circle cx="11" cy="11" r="10.6" fill="#7b1fa2"/><text x="11" y="15.6" font-family="Liberation Sans" font-size="12.5" fill="#fff" text-anchor="middle">M</text></svg>
<svg style="left:1893px;top:44px;" width="10" height="16" viewBox="0 0 10 16"><circle cx="5" cy="3" r="1.6" fill="#5f6368"/><circle cx="5" cy="8" r="1.6" fill="#5f6368"/><circle cx="5" cy="13" r="1.6" fill="#5f6368"/></svg>
<svg style="left:760px;top:-50px;z-index:40" width="100" height="100" viewBox="0 0 100 100"><circle cx="49" cy="50" r="34.5" fill="none" stroke="#f2f20c" stroke-width="4.4" opacity="0.92"/></svg>
<svg style="left:806px;top:0px;z-index:41" width="20" height="24" viewBox="0 0 20 24"><path d="M2 1 L2 17.5 L6 13.8 L8.8 20 L11.2 19 L8.6 12.8 L14 12.8 Z" fill="#fff" stroke="#111" stroke-width="1.1" stroke-linejoin="round"/></svg>
<svg style="left:27.6px;top:98.5px;" width="32" height="32" viewBox="0 0 32 32"><circle cx="3.0" cy="3.0" r="2.75" fill="#fff"/><circle cx="3.0" cy="13.6" r="2.75" fill="#fff"/><circle cx="3.0" cy="24.2" r="2.75" fill="#fff"/><circle cx="13.6" cy="3.0" r="2.75" fill="#fff"/><circle cx="13.6" cy="13.6" r="2.75" fill="#fff"/><circle cx="13.6" cy="24.2" r="2.75" fill="#fff"/><circle cx="24.2" cy="3.0" r="2.75" fill="#fff"/><circle cx="24.2" cy="13.6" r="2.75" fill="#fff"/><circle cx="24.2" cy="24.2" r="2.75" fill="#fff"/></svg>
<svg style="left:566px;top:105px;" width="20" height="14" viewBox="0 0 20 14"><path d="M3 3.5 L10 10.5 L17 3.5" fill="none" stroke="#fff" stroke-width="1.6"/></svg>
<svg style="left:662px;top:98px;" width="30" height="30" viewBox="0 0 30 30"><circle cx="18" cy="11" r="8" fill="none" stroke="#33503f" stroke-width="1.8"/><path d="M12.2 16.8 L3 26" stroke="#33503f" stroke-width="2"/></svg>
<svg style="left:1778px;top:97px;" width="32" height="32" viewBox="0 0 32 32"><path d="M25.95 13.35 L29.31 13.72 L29.31 18.28 L25.95 18.65 L24.91 21.17 L27.02 23.79 L23.79 27.02 L21.17 24.91 L18.65 25.95 L18.28 29.31 L13.72 29.31 L13.35 25.95 L10.83 24.91 L8.21 27.02 L4.98 23.79 L7.09 21.17 L6.05 18.65 L2.69 18.28 L2.69 13.72 L6.05 13.35 L7.09 10.83 L4.98 8.21 L8.21 4.98 L10.83 7.09 L13.35 6.05 L13.72 2.69 L18.28 2.69 L18.65 6.05 L21.17 7.09 L23.79 4.98 L27.02 8.21 L24.91 10.83 Z" fill="none" stroke="#fff" stroke-width="1.6" stroke-linejoin="round"/><circle cx="16" cy="16" r="4.8" fill="none" stroke="#fff" stroke-width="1.6"/></svg>
<svg style="left:1848px;top:83px;" width="60" height="60" viewBox="0 0 60 60"><circle cx="30" cy="30" r="27.5" fill="none" stroke="#dff5e6" stroke-width="1.5"/></svg>
<div class="a" style="left:141px;top:204px;width:68px;height:4.5px;background:#107c41;"></div>
<div class="a" style="left:1289.5px;top:162.5px;width:171px;height:48px;background:#fff;border:1px solid #d2d0ce;border-radius:4px;box-sizing:border-box"></div>
<svg style="left:1300px;top:170px;" width="34" height="34" viewBox="0 0 34 34"><path d="M5 29.5 L7 21 L23.5 4.5 A3 3 0 0 1 28 4.5 L29.5 6 A3 3 0 0 1 29.5 10.5 L13 27 Z M20.5 7.5 L26.5 13.5 M7 21 L13 27" fill="none" stroke="#107c41" stroke-width="1.9" stroke-linejoin="round"/></svg>
<svg style="left:1426px;top:178px;" width="22" height="18" viewBox="0 0 22 18"><path d="M3 5 L11 13 L19 5" fill="none" stroke="#107c41" stroke-width="1.7"/></svg>
<div class="a" style="left:1475px;top:162px;width:157px;height:49px;background:#107c41;border-radius:4px"></div>
<svg style="left:1488px;top:172px;" width="34" height="34" viewBox="0 0 34 34"><circle cx="9.5" cy="15.5" r="4.3" fill="none" stroke="#fff" stroke-width="1.8"/><path d="M2 28.5 C2 21.5 17 21.5 17 28.5" fill="none" stroke="#fff" stroke-width="1.8"/><circle cx="22.5" cy="7.5" r="4.3" fill="none" stroke="#fff" stroke-width="1.8"/><path d="M17 16 C18 13 27 13 29.5 20" fill="none" stroke="#fff" stroke-width="1.8"/></svg>
<svg style="left:1597px;top:178px;" width="22" height="18" viewBox="0 0 22 18"><path d="M3 5 L11 13 L19 5" fill="none" stroke="#fff" stroke-width="1.7"/></svg>
<div class="a" style="left:1646px;top:162.5px;width:187px;height:48px;background:#fff;border:1px solid #d2d0ce;border-radius:4px;box-sizing:border-box"></div>
<svg style="left:1660px;top:171px;" width="34" height="34" viewBox="0 0 34 34"><path d="M4 5 L29 5 L29 22 L14 22 L7.5 28.5 L7.5 22 L4 22 Z" fill="none" stroke="#107c41" stroke-width="1.9" stroke-linejoin="round"/></svg>
<div class="a" style="left:1847px;top:162.5px;width:58.5px;height:48px;background:#fff;border:1px solid #d2d0ce;border-radius:4px;box-sizing:border-box"></div>
<svg style="left:1860px;top:172px;" width="32" height="30" viewBox="0 0 32 30"><path d="M2 15 L8 15 L12.5 7 L18 23 L22.5 15 L29 15" fill="none" stroke="#107c41" stroke-width="1.9" stroke-linejoin="round"/><circle cx="4" cy="15" r="2.2" fill="#107c41"/><circle cx="27.5" cy="15" r="2.2" fill="#107c41"/></svg>
<div class="a" style="left:71.7px;top:217px;width:1.8px;height:155px;background:#c4c2c0;"></div>
<div class="a" style="left:219.7px;top:217px;width:1.8px;height:155px;background:#c4c2c0;"></div>
<div class="a" style="left:650.7px;top:217px;width:1.8px;height:155px;background:#c4c2c0;"></div>
<div class="a" style="left:1039.2px;top:217px;width:1.8px;height:155px;background:#c4c2c0;"></div>
<div class="a" style="left:1296.2px;top:217px;width:1.8px;height:155px;background:#c4c2c0;"></div>
<div class="a" style="left:1627.2px;top:217px;width:1.8px;height:155px;background:#c4c2c0;"></div>
<div class="a" style="left:1727.7px;top:217px;width:1.8px;height:155px;background:#c4c2c0;"></div>
<div class="a" style="left:1828.7px;top:217px;width:1.8px;height:155px;background:#c4c2c0;"></div>
<div class="a" style="left:799.2px;top:224px;width:1.8px;height:124px;background:#c4c2c0;"></div>
<svg style="left:18px;top:238px;" width="36" height="40" viewBox="0 0 36 40"><path d="M6.5 15.5 A10.6 10.6 0 1 1 26.5 22.5 L15 34" fill="none" stroke="#323130" stroke-width="1.9"/><path d="M5 6.5 L5 17.5 L16 17.5" fill="none" stroke="#323130" stroke-width="1.9"/></svg>
<svg style="left:18px;top:288px;" width="36" height="40" viewBox="0 0 36 40"><path d="M29.5 15.5 A10.6 10.6 0 1 0 9.5 22.5 L21 33" fill="none" stroke="#a19f9d" stroke-width="1.9"/><path d="M28.7 5 L28.7 16.5 L17.8 16.5" fill="none" stroke="#a19f9d" stroke-width="1.9"/></svg>
<svg style="left:98px;top:222px;" width="56" height="58" viewBox="0 0 56 58"><rect x="5" y="10.5" width="35" height="40" fill="#f7f7f7" stroke="#f3a31d" stroke-width="2.6"/><rect x="11" y="7.5" width="21.5" height="8" fill="#f7f7f7" stroke="#605e5c" stroke-width="1.6"/><path d="M17.5 7.5 A4.3 4.3 0 0 1 26 7.5" fill="none" stroke="#605e5c" stroke-width="1.6"/><rect x="27" y="23.5" width="23.5" height="31" fill="#fafafa" stroke="#3b3a39" stroke-width="2"/></svg>
<svg style="left:114.5px;top:324px;" width="12" height="8" viewBox="0 0 12 8"><path d="M1.5 1.5 L6 6 L10.5 1.5" fill="none" stroke="#323130" stroke-width="1.5"/></svg>
<svg style="left:168px;top:222px;" width="30" height="34" viewBox="0 0 30 34"><path d="M10.5 3 L20 22 M19.5 3 L10 22" stroke="#323130" stroke-width="1.4"/><circle cx="9.5" cy="26.5" r="3" fill="#e6f2fb" stroke="#2e9bd6" stroke-width="1.9"/><circle cx="20.5" cy="26.5" r="3" fill="#e6f2fb" stroke="#2e9bd6" stroke-width="1.9"/></svg>
<svg style="left:166px;top:264px;" width="36" height="34" viewBox="0 0 36 34"><path d="M15 26.5 L5 26.5 L5 3.5 L15 3.5 L17.5 6" fill="none" stroke="#323130" stroke-width="1.9"/><path d="M15.5 8.5 L25 8.5 L31 14.5 L31 30 L15.5 30 Z" fill="#fafafa" stroke="#323130" stroke-width="1.9" stroke-linejoin="round"/><path d="M24.5 8.5 L24.5 15 L31 15" fill="none" stroke="#323130" stroke-width="1.6"/><path d="M19.5 20.5 L27 20.5 M19.5 24.5 L27 24.5" stroke="#323130" stroke-width="1.5"/></svg>
<svg style="left:166px;top:306px;" width="36" height="34" viewBox="0 0 36 34"><path d="M5.5 15.5 L14.5 11.5 L23 20 L18 28.5 Z" fill="#fbd38a" stroke="#f3a31d" stroke-width="2" stroke-linejoin="round"/><path d="M14.5 11.5 L20 6 L28.5 14.5 L23 20 Z" fill="#fff" stroke="#323130" stroke-width="1.8" stroke-linejoin="round"/><path d="M24 10 L29.5 4.5 A2 2 0 0 1 32.5 7.5 L27 13" fill="#fff" stroke="#323130" stroke-width="1.8"/></svg>
<div class="a" style="left:235.5px;top:237px;width:312.5px;height:42px;background:#fff;border:1px solid #8a8886;box-sizing:border-box"></div>
<div class="a" style="left:457px;top:238px;width:1px;height:40px;background:#8a8886;"></div>
<svg style="left:442px;top:254px;" width="12" height="8" viewBox="0 0 12 8"><path d="M1.5 1.5 L6 6 L10.5 1.5" fill="none" stroke="#323130" stroke-width="1.5"/></svg>
<svg style="left:531px;top:254px;" width="12" height="8" viewBox="0 0 12 8"><path d="M1.5 1.5 L6 6 L10.5 1.5" fill="none" stroke="#323130" stroke-width="1.5"/></svg>
<svg style="left:556px;top:240px;" width="34" height="30" viewBox="0 0 34 30"><path d="M5 26 L14 3 L23 26 M8.5 17.5 L19.5 17.5" fill="none" stroke="#323130" stroke-width="1.9"/><path d="M23.5 8 L27 4.5 L30.5 8" fill="none" stroke="#2e9bd6" stroke-width="1.6"/></svg>
<svg style="left:602px;top:240px;" width="30" height="30" viewBox="0 0 30 30"><path d="M4 26 L11.5 9 L19 26 M7 19 L16 19" fill="none" stroke="#323130" stroke-width="1.8"/><path d="M19.5 5 L23 8.5 L26.5 5" fill="none" stroke="#2e9bd6" stroke-width="1.6"/></svg>
<svg style="left:288px;top:292px;" width="22" height="26" viewBox="0 0 22 26"><path d="M10 4 L19 4 M5 22 L14 22 M14.5 4 L9.5 22" fill="none" stroke="#323130" stroke-width="1.7"/></svg>
<svg style="left:326px;top:292px;" width="26" height="34" viewBox="0 0 26 34"><path d="M7 3.5 L7 14 A6 6 0 0 0 19 14 L19 3.5" fill="none" stroke="#323130" stroke-width="1.9"/><path d="M5 26.5 L21 26.5" stroke="#323130" stroke-width="1.7"/></svg>
<svg style="left:368px;top:292px;" width="26" height="34" viewBox="0 0 26 34"><path d="M6.5 3.5 L11.5 3.5 A9 9 0 0 1 11.5 20.5 L6.5 20.5 Z" fill="none" stroke="#323130" stroke-width="1.9"/><path d="M4.5 25 L22.5 25 M4.5 29 L22.5 29" stroke="#323130" stroke-width="1.6"/></svg>
<div class="a" style="left:409px;top:308px;width:29px;height:1.6px;background:#323130;"></div>
<svg style="left:450px;top:292px;" width="30" height="30" viewBox="0 0 30 30"><rect x="2.00" y="2.00" width="1.6" height="1.6" fill="#323130"/><rect x="2.00" y="5.55" width="1.6" height="1.6" fill="#323130"/><rect x="2.00" y="9.10" width="1.6" height="1.6" fill="#323130"/><rect x="2.00" y="12.65" width="1.6" height="1.6" fill="#323130"/><rect x="2.00" y="16.20" width="1.6" height="1.6" fill="#323130"/><rect x="2.00" y="19.75" width="1.6" height="1.6" fill="#323130"/><rect x="2.00" y="23.30" width="1.6" height="1.6" fill="#323130"/><rect x="2.00" y="26.85" width="1.6" height="1.6" fill="#323130"/><rect x="5.55" y="2.00" width="1.6" height="1.6" fill="#323130"/><rect x="5.55" y="16.20" width="1.6" height="1.6" fill="#323130"/><rect x="5.55" y="26.85" width="1.6" height="1.6" fill="#323130"/><rect x="9.10" y="2.00" width="1.6" height="1.6" fill="#323130"/><rect x="9.10" y="16.20" width="1.6" height="1.6" fill="#323130"/><rect x="9.10" y="26.85" width="1.6" height="1.6" fill="#323130"/><rect x="12.65" y="2.00" width="1.6" height="1.6" fill="#323130"/><rect x="12.65" y="16.20" width="1.6" height="1.6" fill="#323130"/><rect x="12.65" y="26.85" width="1.6" height="1.6" fill="#323130"/><rect x="16.20" y="2.00" width="1.6" height="1.6" fill="#323130"/><rect x="16.20" y="5.55" width="1.6" height="1.6" fill="#323130"/><rect x="16.20" y="9.10" width="1.6" height="1.6" fill="#323130"/><rect x="16.20" y="12.65" width="1.6" height="1.6" fill="#323130"/><rect x="16.20" y="16.20" width="1.6" height="1.6" fill="#323130"/><rect x="16.20" y="19.75" width="1.6" height="1.6" fill="#323130"/><rect x="16.20" y="23.30" width="1.6" height="1.6" fill="#323130"/><rect x="16.20" y="26.85" width="1.6" height="1.6" fill="#323130"/><rect x="19.75" y="2.00" width="1.6" height="1.6" fill="#323130"/><rect x="19.75" y="16.20" width="1.6" height="1.6" fill="#323130"/><rect x="19.75" y="26.85" width="1.6" height="1.6" fill="#323130"/><rect x="23.30" y="2.00" width="1.6" height="1.6" fill="#323130"/><rect x="23.30" y="16.20" width="1.6" height="1.6" fill="#323130"/><rect x="23.30" y="26.85" width="1.6" height="1.6" fill="#323130"/><rect x="26.85" y="2.00" width="1.6" height="1.6" fill="#323130"/><rect x="26.85" y="5.55" width="1.6" height="1.6" fill="#323130"/><rect x="26.85" y="9.10" width="1.6" height="1.6" fill="#323130"/><rect x="26.85" y="12.65" width="1.6" height="1.6" fill="#323130"/><rect x="26.85" y="16.20" width="1.6" height="1.6" fill="#323130"/><rect x="26.85" y="19.75" width="1.6" height="1.6" fill="#323130"/><rect x="26.85" y="23.30" width="1.6" height="1.6" fill="#323130"/><rect x="26.85" y="26.85" width="1.6" height="1.6" fill="#323130"/><rect x="1.5" y="26.5" width="27" height="2.2" fill="#323130"/></svg>
<svg style="left:487px;top:303px;" width="12" height="8" viewBox="0 0 12 8"><path d="M1.5 1.5 L6 6 L10.5 1.5" fill="none" stroke="#323130" stroke-width="1.5"/></svg>
<svg style="left:509px;top:290px;" width="34" height="34" viewBox="0 0 34 34"><path d="M7.5 14 L15.5 5 L22.5 12 L14.5 21 Z" fill="none" stroke="#323130" stroke-width="1.8" stroke-linejoin="round"/><path d="M15.5 5 L17.5 3 A1.5 1.5 0 0 1 20 5 L20 9.5" fill="none" stroke="#323130" stroke-width="1.6"/><path d="M21 10 A5 5 0 0 1 28 14 L28 18" fill="none" stroke="#1d6aa5" stroke-width="2.2"/><rect x="3" y="24.5" width="28" height="7.3" fill="#ffff00"/></svg>
<svg style="left:547px;top:303px;" width="12" height="8" viewBox="0 0 12 8"><path d="M1.5 1.5 L6 6 L10.5 1.5" fill="none" stroke="#323130" stroke-width="1.5"/></svg>
<svg style="left:568px;top:290px;" width="34" height="34" viewBox="0 0 34 34"><path d="M9 23 L17 4 L25 23 M12 16 L22 16" fill="none" stroke="#323130" stroke-width="1.9"/><rect x="3" y="25" width="28" height="6.5" fill="#e80000"/></svg>
<svg style="left:606.5px;top:303px;" width="12" height="8" viewBox="0 0 12 8"><path d="M1.5 1.5 L6 6 L10.5 1.5" fill="none" stroke="#323130" stroke-width="1.5"/></svg>
<svg style="left:672px;top:225px;" width="30" height="30" viewBox="0 0 30 30"><rect x="3" y="3" width="24" height="2.2" fill="#323130"/><rect x="7" y="10" width="16" height="2.2" fill="#323130"/><rect x="3" y="17" width="24" height="2.2" fill="#323130"/></svg>
<svg style="left:714px;top:230px;" width="30" height="30" viewBox="0 0 30 30"><rect x="3" y="3" width="24" height="2.2" fill="#323130"/><rect x="7" y="10" width="16" height="2.2" fill="#323130"/><rect x="3" y="17" width="24" height="2.2" fill="#323130"/></svg>
<div class="a" style="left:750px;top:221px;width:42px;height:42px;background:#e1dfdd;border:1px solid #8a8886;box-sizing:border-box"></div>
<svg style="left:755px;top:237px;" width="30" height="30" viewBox="0 0 30 30"><rect x="3" y="3" width="24" height="2.2" fill="#323130"/><rect x="7" y="10" width="16" height="2.2" fill="#323130"/><rect x="3" y="17" width="24" height="2.2" fill="#323130"/></svg>
<svg style="left:672px;top:271px;" width="30" height="30" viewBox="0 0 30 30"><rect x="3" y="2.5" width="24" height="2.2" fill="#323130"/><rect x="3" y="9.5" width="14" height="2.2" fill="#323130"/><rect x="3" y="16.5" width="24" height="2.2" fill="#323130"/><rect x="3" y="23.5" width="14" height="2.2" fill="#323130"/></svg>
<svg style="left:714px;top:271px;" width="30" height="30" viewBox="0 0 30 30"><rect x="3" y="2.5" width="24" height="2.2" fill="#323130"/><rect x="8" y="9.5" width="14" height="2.2" fill="#323130"/><rect x="3" y="16.5" width="24" height="2.2" fill="#323130"/><rect x="8" y="23.5" width="14" height="2.2" fill="#323130"/></svg>
<svg style="left:756px;top:271px;" width="30" height="30" viewBox="0 0 30 30"><rect x="3" y="2.5" width="24" height="2.2" fill="#323130"/><rect x="13" y="9.5" width="14" height="2.2" fill="#323130"/><rect x="3" y="16.5" width="24" height="2.2" fill="#323130"/><rect x="13" y="23.5" width="14" height="2.2" fill="#323130"/></svg>
<svg style="left:672px;top:313px;" width="30" height="30" viewBox="0 0 30 30"><rect x="3" y="3" width="24" height="2.2" fill="#323130"/><rect x="3" y="10" width="7" height="2.2" fill="#323130"/><rect x="3" y="17" width="7" height="2.2" fill="#323130"/><rect x="3" y="24" width="24" height="2.2" fill="#323130"/><rect x="20" y="10" width="7" height="2.2" fill="#323130"/><rect x="20" y="17" width="7" height="2.2" fill="#323130"/><path d="M13 14.2 L24 14.2 M17 10.5 L13 14.2 L17 18" fill="none" stroke="#2e9bd6" stroke-width="2"/></svg>
<svg style="left:714px;top:313px;" width="30" height="30" viewBox="0 0 30 30"><rect x="3" y="3" width="24" height="2.2" fill="#323130"/><rect x="20" y="10" width="7" height="2.2" fill="#323130"/><rect x="20" y="17" width="7" height="2.2" fill="#323130"/><rect x="3" y="24" width="24" height="2.2" fill="#323130"/><path d="M3 14.2 L14 14.2 M10 10.5 L14 14.2 L10 18" fill="none" stroke="#2e9bd6" stroke-width="2"/></svg>
<svg style="left:826px;top:255px;" width="20" height="20" viewBox="0 0 20 20"><path d="M16 1.5 A5 5 0 0 1 14 10.5 L4 10.5 M8.5 6 L4 10.5 L8.5 15" fill="none" stroke="#2e9bd6" stroke-width="1.9"/></svg>
<svg style="left:813px;top:292px;" width="32" height="30" viewBox="0 0 32 30"><rect x="3" y="3" width="25.5" height="25" fill="#fff" stroke="#3b4a5c" stroke-width="2.2"/><rect x="3" y="9.5" width="25.5" height="12" fill="#dff0fb" stroke="#3b4a5c" stroke-width="1.8"/><path d="M15.5 3 L15.5 9.5 M15.5 21.5 L15.5 28" stroke="#3b4a5c" stroke-width="1.8"/><path d="M7 15.5 L24.5 15.5 M10.5 12 L7 15.5 L10.5 19 M21 12 L24.5 15.5 L21 19" fill="none" stroke="#2e8bc9" stroke-width="1.8"/></svg>
<svg style="left:1006px;top:305px;" width="12" height="8" viewBox="0 0 12 8"><path d="M1.5 1.5 L6 6 L10.5 1.5" fill="none" stroke="#323130" stroke-width="1.5"/></svg>
<div class="a" style="left:1055px;top:237px;width:224px;height:42px;background:#fff;border:1px solid #8a8886;box-sizing:border-box"></div>
<svg style="left:1261px;top:254px;" width="12" height="8" viewBox="0 0 12 8"><path d="M1.5 1.5 L6 6 L10.5 1.5" fill="none" stroke="#323130" stroke-width="1.5"/></svg>
<svg style="left:1097px;top:303px;" width="12" height="8" viewBox="0 0 12 8"><path d="M1.5 1.5 L6 6 L10.5 1.5" fill="none" stroke="#323130" stroke-width="1.5"/></svg>
<svg style="left:1168px;top:292px;" width="20" height="28" viewBox="0 0 20 28"><circle cx="9.5" cy="9.5" r="5.2" fill="#323130"/><path d="M13.6 11 C14.5 17 11 22 5 24.5" fill="none" stroke="#323130" stroke-width="2.6"/></svg>
<svg style="left:1202px;top:290px;" width="34" height="34" viewBox="0 0 34 34"><path d="M3 12 L18 12 M8.5 7 L3 12 L8.5 17" fill="none" stroke="#2e9bd6" stroke-width="2"/><ellipse cx="27" cy="9.5" rx="3.6" ry="6.3" fill="none" stroke="#323130" stroke-width="1.7"/><rect x="12" y="27" width="2" height="2" fill="#323130"/><ellipse cx="19" cy="23.5" rx="3.6" ry="6" fill="none" stroke="#323130" stroke-width="1.7"/><ellipse cx="28" cy="23.5" rx="3.6" ry="6" fill="none" stroke="#323130" stroke-width="1.7"/></svg>
<svg style="left:1244px;top:290px;" width="34" height="34" viewBox="0 0 34 34"><rect x="5.5" y="13.5" width="2" height="2" fill="#323130"/><ellipse cx="13" cy="10" rx="3.6" ry="6.3" fill="none" stroke="#323130" stroke-width="1.7"/><ellipse cx="22.5" cy="10" rx="3.6" ry="6.3" fill="none" stroke="#323130" stroke-width="1.7"/><path d="M3 24 L18 24 M12.5 19 L18 24 L12.5 29" fill="none" stroke="#2e9bd6" stroke-width="2"/><rect x="18.5" y="27" width="2" height="2" fill="#323130"/><ellipse cx="27" cy="23.5" rx="3.6" ry="6" fill="none" stroke="#323130" stroke-width="1.7"/></svg>
<svg style="left:1352.5px;top:233.5px;" width="50" height="40" viewBox="0 0 50 40"><rect x="1" y="1" width="47" height="37" fill="#fff"/><rect x="9" y="1" width="22" height="12" fill="#f1707a"/><rect x="9" y="13" width="15" height="12" fill="#5b9bd5"/><rect x="9" y="25" width="25" height="12" fill="#f1707a"/><path d="M1 1 H48 V38 H1 Z M1 13 H48 M1 25 H48 M9 1 V38 M39 1 V38" fill="none" stroke="#323130" stroke-width="1.7"/><path d="M9 1 H31 V13 H24 V25 H34 V38 H9 Z" fill="none" stroke="#c4262e" stroke-width="1.7"/></svg>
<svg style="left:1421.5px;top:327px;" width="12" height="8" viewBox="0 0 12 8"><path d="M1.5 1.5 L6 6 L10.5 1.5" fill="none" stroke="#323130" stroke-width="1.5"/></svg>
<svg style="left:1468px;top:233.5px;" width="56" height="48" viewBox="0 0 56 48"><rect x="1" y="1" width="48" height="37" fill="#fff"/><rect x="17" y="13" width="32" height="25" fill="#5b9bd5"/><path d="M1 1 H49 V38 H1 Z M1 13 H49 M1 25 H49 M17 1 V38 M33 1 V38" fill="none" stroke="#323130" stroke-width="1.7"/><path d="M31 42 C27 44 23 45 22 43.5 C24.5 40 25 35.5 29.5 35 L34 39 C33.5 40.5 32.5 41.5 31 42 Z" fill="#5b9bd5" stroke="#323130" stroke-width="1.4"/><path d="M30 34.5 L47 14.5 A2.2 2.2 0 0 1 50.5 17.5 L34 38.5" fill="#fff" stroke="#323130" stroke-width="1.6"/></svg>
<svg style="left:1510.5px;top:327px;" width="12" height="8" viewBox="0 0 12 8"><path d="M1.5 1.5 L6 6 L10.5 1.5" fill="none" stroke="#323130" stroke-width="1.5"/></svg>
<svg style="left:1552.5px;top:233.5px;" width="56" height="48" viewBox="0 0 56 48"><rect x="1" y="1" width="48" height="37" fill="#fff"/><rect x="9" y="9" width="31" height="20" fill="#5b9bd5"/><path d="M1 1 H49 V38 H1 Z M1 9 H49 M1 29 H9 M9 1 V38 M40 1 V9" fill="none" stroke="#323130" stroke-width="1.7"/><path d="M40 9 V29 H9" fill="none" stroke="#5b9bd5" stroke-width="1.7"/><path d="M31 42 C27 44 23 45 22 43.5 C24.5 40 25 35.5 29.5 35 L34 39 C33.5 40.5 32.5 41.5 31 42 Z" fill="#5b9bd5" stroke="#323130" stroke-width="1.4"/><path d="M30 34.5 L47 14.5 A2.2 2.2 0 0 1 50.5 17.5 L34 38.5" fill="#fff" stroke="#323130" stroke-width="1.6"/></svg>
<svg style="left:1571px;top:327px;" width="12" height="8" viewBox="0 0 12 8"><path d="M1.5 1.5 L6 6 L10.5 1.5" fill="none" stroke="#323130" stroke-width="1.5"/></svg>
<svg style="left:1653px;top:225px;" width="52" height="48" viewBox="0 0 52 48"><path d="M10 2 H40 M10 0 V4 M40 0 V4" stroke="#2e9bd6" stroke-width="1.6"/><rect x="1" y="8" width="48" height="37" fill="#fff"/><rect x="13" y="20" width="24" height="13" fill="#5b9bd5"/><path d="M1 8 H49 V45 H1 Z M1 20 H49 M1 33 H49 M13 8 V45 M37 8 V45" fill="none" stroke="#323130" stroke-width="1.7"/></svg>
<svg style="left:1671.5px;top:327px;" width="12" height="8" viewBox="0 0 12 8"><path d="M1.5 1.5 L6 6 L10.5 1.5" fill="none" stroke="#323130" stroke-width="1.5"/></svg>
<svg style="left:1744px;top:225px;" width="64" height="60" viewBox="0 0 64 60"><circle cx="41" cy="22.5" r="17.5" fill="#fff" stroke="#323130" stroke-width="2"/><path d="M28.6 34.9 L9 53.5" stroke="#323130" stroke-width="2"/></svg>
<svg style="left:1772.5px;top:327px;" width="12" height="8" viewBox="0 0 12 8"><path d="M1.5 1.5 L6 6 L10.5 1.5" fill="none" stroke="#323130" stroke-width="1.5"/></svg>
<svg style="left:1893px;top:354px;" width="20" height="12" viewBox="0 0 20 12"><path d="M2 10 L10 2.5 L18 10" fill="none" stroke="#323130" stroke-width="1.7"/></svg>
<svg style="left:202px;top:400px;" width="14" height="10" viewBox="0 0 14 10"><path d="M2 2.5 L7 7.5 L12 2.5" fill="none" stroke="#323130" stroke-width="1.8"/></svg>
<svg style="left:250px;top:391px;" width="26" height="26" viewBox="0 0 26 26"><path d="M3 3 L23 23 M23 3 L3 23" stroke="#a6a6a6" stroke-width="1.6"/></svg>
<svg style="left:298px;top:391px;" width="32" height="24" viewBox="0 0 32 24"><path d="M2.5 12 L11.5 21 L29.5 3" fill="none" stroke="#a6a6a6" stroke-width="1.6"/></svg>
<svg style="left:1889px;top:397px;" width="22" height="14" viewBox="0 0 22 14"><path d="M2.5 2.5 L10.5 10.5 L18.5 2.5" fill="none" stroke="#323130" stroke-width="1.6"/></svg>
<svg style="left:20px;top:959px;" width="16" height="20" viewBox="0 0 16 20"><path d="M11.5 2.5 L4.5 10 L11.5 17.5" fill="none" stroke="#c0c0c0" stroke-width="1.5"/></svg>
<svg style="left:77px;top:960px;" width="16" height="20" viewBox="0 0 16 20"><path d="M4 2.5 L11.5 10 L4 17.5" fill="none" stroke="#3b3a39" stroke-width="1.5"/></svg>
<svg style="left:128px;top:960px;" width="26" height="20" viewBox="0 0 26 20"><path d="M2 3.8 H23 M2 10.4 H23 M2 17 H23" stroke="#323130" stroke-width="1.8"/></svg>
<svg style="left:1428px;top:958px;" width="26" height="26" viewBox="0 0 26 26"><path d="M13 2.5 V23 M2.5 12.7 H23" stroke="#323130" stroke-width="1.8"/></svg>
<svg style="left:1358px;top:1018px;" width="16" height="14" viewBox="0 0 16 14"><path d="M3.5 4.5 L8 9 L12.5 4.5" fill="none" stroke="#555" stroke-width="2.4"/></svg>
<div class="a" style="left:1772.5px;top:1020.8px;width:20px;height:1.8px;background:#323130;"></div>
<svg style="left:1869px;top:1010px;" width="24" height="24" viewBox="0 0 24 24"><path d="M12 2 V22 M2 12 H22" stroke="#323130" stroke-width="1.8"/></svg>
<svg style="left:14px;top:1050px;" width="20" height="20" viewBox="0 0 20 20"><rect x="2" y="2" width="7.3" height="7.3" fill="#fff"/><rect x="10.7" y="2" width="7.3" height="7.3" fill="#fff"/><rect x="2" y="10.7" width="7.3" height="7.3" fill="#fff"/><rect x="10.7" y="10.7" width="7.3" height="7.3" fill="#fff"/></svg>
<svg style="left:57px;top:1050px;" width="22" height="22" viewBox="0 0 22 22"><circle cx="13" cy="8.5" r="5.8" fill="none" stroke="#323232" stroke-width="1.6"/><path d="M8.8 12.7 L2.5 19" stroke="#323232" stroke-width="1.7"/></svg>
<svg style="left:406px;top:1047px;" width="26" height="26" viewBox="0 0 26 26"><defs><linearGradient id="eg" x1="0" y1="0" x2="1" y2="1"><stop offset="0" stop-color="#36c6a0"/><stop offset="0.5" stop-color="#1a8fd6"/><stop offset="1" stop-color="#0c59a4"/></linearGradient></defs><circle cx="13" cy="13" r="12" fill="url(#eg)"/><path d="M6 15 C6 9 12 7 16 9 C20 11 19 16 15 16 L10 16 C10 20 15 22 20 20 C17 24 6 23 6 15 Z" fill="#1e2b3a" opacity="0.55"/></svg>
<svg style="left:455px;top:1047px;" width="26" height="26" viewBox="0 0 26 26"><path d="M8 6 A5 4 0 0 1 18 6" fill="none" stroke="#4ba0e8" stroke-width="2"/><rect x="2" y="6" width="22" height="18" rx="2.5" fill="#f3f3f3"/><rect x="8" y="10" width="4.5" height="4.5" fill="#f25022"/><rect x="13.5" y="10" width="4.5" height="4.5" fill="#7fba00"/><rect x="8" y="15.5" width="4.5" height="4.5" fill="#00a4ef"/><rect x="13.5" y="15.5" width="4.5" height="4.5" fill="#ffb900"/></svg>
<svg style="left:504px;top:1047px;" width="26" height="26" viewBox="0 0 26 26"><rect x="1" y="6" width="24" height="17" fill="#1a8ad4"/><path d="M1 6 L13 15 L25 6" fill="#5fb4ef"/><path d="M1 23 L10 14 M25 23 L16 14" stroke="#0e6bb0" stroke-width="1"/><path d="M1 6 L13 15 L25 6" fill="none" stroke="#e8f4fc" stroke-width="1.2"/></svg>
<svg style="left:553px;top:1047px;" width="26" height="28" viewBox="0 0 26 28"><rect x="3" y="2" width="15" height="12" fill="#2b2fd6" stroke="#c8c8c8" stroke-width="1.5"/><rect x="14" y="7" width="8" height="10" fill="#cdcdcd"/><ellipse cx="17" cy="21" rx="8" ry="4" fill="#d0d0d0"/><circle cx="17" cy="21" r="2.5" fill="#3a9a3a"/></svg>
<svg style="left:602px;top:1047px;" width="26" height="26" viewBox="0 0 26 26"><rect x="1" y="1" width="24" height="24" rx="2" fill="#2338a8"/><rect x="6" y="7" width="14" height="6" fill="#fff"/><rect x="4" y="13" width="18" height="6" fill="#e8e8e8"/></svg>
<svg style="left:651px;top:1047px;" width="26" height="26" viewBox="0 0 26 26"><defs><radialGradient id="ff" cx="0.6" cy="0.3" r="0.8"><stop offset="0" stop-color="#ffde3a"/><stop offset="0.5" stop-color="#ff7a1a"/><stop offset="1" stop-color="#e3245b"/></radialGradient></defs><circle cx="13" cy="14" r="11.5" fill="url(#ff)"/><circle cx="13" cy="15" r="5.5" fill="#7542e5"/><path d="M5 8 C8 2 15 1 20 3 C15 4 13 7 13 9 Z" fill="#ffb21a"/></svg>
<svg style="left:700px;top:1047px;" width="26" height="26" viewBox="0 0 26 26"><path d="M1 5 L10 5 L12 7.5 L25 7.5 L25 23 L1 23 Z" fill="#f0b429"/><rect x="1" y="10" width="24" height="13" fill="#ffd24d"/><rect x="7" y="16" width="12" height="7" fill="#1e88e5"/></svg>
<svg style="left:749px;top:1047px;" width="26" height="26" viewBox="0 0 26 26"><circle cx="13" cy="13" r="12" fill="#db4437"/><path d="M13 13 L2.6 19 A12 12 0 0 0 19 23.4 Z" fill="#0f9d58"/><path d="M13 13 L19 23.4 A12 12 0 0 0 23.4 7 L13 7 Z" fill="#ffcd40"/><circle cx="13" cy="13" r="5.6" fill="#fff"/><circle cx="13" cy="13" r="4.3" fill="#4285f4"/></svg>
<svg style="left:798px;top:1047px;" width="26" height="26" viewBox="0 0 26 26"><circle cx="13" cy="13" r="10.5" fill="none" stroke="#c8ccd4" stroke-width="1.6"/><circle cx="13" cy="13" r="4" fill="#a9c8e8"/></svg>
<div class="a" style="left:546px;top:1078px;width:39.5px;height:2px;background:#8fb4d8;"></div>
<div class="a" style="left:644px;top:1078px;width:40px;height:2px;background:#8fb4d8;"></div>
<div class="a" style="left:693px;top:1078px;width:40px;height:2px;background:#8fb4d8;"></div>
<div class="a" style="left:742.5px;top:1078px;width:38.5px;height:2px;background:#8fb4d8;"></div>
<svg style="left:1515px;top:1045px;" width="30" height="30" viewBox="0 0 30 30"><defs><mask id="mm"><rect width="30" height="30" fill="#fff"/><circle cx="10" cy="10" r="9" fill="#000"/></mask></defs><circle cx="15" cy="15.5" r="10" fill="#f5a623" mask="url(#mm)"/><circle cx="23" cy="5" r="2.5" fill="#e0452b"/><path d="M3 14 C2 11 4 9 6.5 9.5 C7.5 6 13 6 14 9.5 C16.5 9.5 17.5 12 16 14 Z" fill="#cfe3f5"/></svg>
<svg style="left:1675px;top:1053px;" width="16" height="14" viewBox="0 0 16 14"><path d="M2 10 L8 4 L14 10" fill="none" stroke="#fff" stroke-width="1.4"/></svg>
<svg style="left:1698px;top:1050px;" width="20" height="20" viewBox="0 0 20 20"><circle cx="10" cy="10" r="7.5" fill="none" stroke="#fff" stroke-width="1.4"/><circle cx="10" cy="10" r="3" fill="#fff"/></svg>
<svg style="left:1722px;top:1049px;" width="20" height="22" viewBox="0 0 20 22"><rect x="3" y="6" width="9" height="10" rx="1.5" fill="none" stroke="#fff" stroke-width="1.4"/><path d="M12 9 L16 7 L16 15 L12 13" fill="none" stroke="#fff" stroke-width="1.3"/><path d="M5 3 H10 M5 19 H10" stroke="#fff" stroke-width="1.2"/></svg>
<svg style="left:1745px;top:1051px;" width="20" height="16" viewBox="0 0 20 16"><path d="M4 13 C0.5 13 1 8 4.5 8 C5 4 11 3 12.5 6.5 C16 6 18 9 17 13 Z" fill="#e8e8e8"/></svg>
<svg style="left:1878px;top:1050px;" width="22" height="22" viewBox="0 0 22 22"><path d="M3 3 H19 V15 H10 L6 19 V15 H3 Z" fill="none" stroke="#fff" stroke-width="1.4" stroke-linejoin="round"/></svg>
<div class="a" style="left:1915px;top:1040px;width:1px;height:40px;background:#5a6470;"></div>
<div class="t" id="t1" style="left:43.55px;top:10.93px;font-size:12.90px;color:#3f4246;transform:scaleX(0.9477);">Microsoft Office Home</div>
<div class="t" id="t2" style="left:282.04px;top:10.93px;font-size:12.90px;color:#3f4246;transform:scaleX(0.9643);">Mail - Miyuki Moriwaki - Outlook</div>
<div class="t" id="t3" style="left:521.57px;top:10.93px;font-size:12.90px;color:#3f4246;transform:scaleX(0.9269);">My files - OneDrive</div>
<div class="t" id="t4" style="left:761.00px;top:10.93px;font-size:12.90px;color:#3f4246;transform:scaleX(0.9119);">Vendor List - MR Auto.xlsx</div>
<div class="t" id="t5" style="left:999.70px;top:10.93px;font-size:12.90px;color:#35383b;transform:scaleX(0.8995);">Miyuki's Review Notes.xlsx</div>
<div class="t" id="t6" style="left:1240.00px;top:10.93px;font-size:12.90px;color:#3f4246;transform:scaleX(0.9388);">Calendar - Miyuki Moriwaki - Ou</div>
<div class="t" id="t7" style="left:142.50px;top:43.86px;font-size:16.52px;color:#202124;transform:scaleX(0.8496);">compaypayroll-my.sharepoint.com</div>
<div class="t" id="t8" style="left:356.00px;top:43.86px;font-size:16.52px;color:#6b6f74;transform:scaleX(0.8365);">/:x:/r/personal/miyuki_chicagocpa_com/_layouts/15/Doc.aspx?</div>
<div class="t" id="t9" style="left:738.50px;top:43.86px;font-size:16.52px;color:#6b6f74;transform:scaleX(0.8160);">sourcedoc=%7B36AB2D39-4FBB-4675-8212-D5DD5EED4CA4%7D</div>
<div class="t" id="t10" style="left:1149.00px;top:43.86px;font-size:16.52px;color:#6b6f74;transform:scaleX(0.8222);">&amp;file=Miyuki%27s%20Review%20Notes.xlsx</div>
<div class="t" id="t11" style="left:1418.75px;top:43.86px;font-size:16.52px;color:#6b6f74;transform:scaleX(0.8849);">&amp;action=default&amp;mobileredirect=true</div>
<div class="t" id="t12" style="left:98.48px;top:100.56px;font-size:27.10px;color:#ffffff;font-weight:bold;transform:scaleX(0.9154);">Excel</div>
<div class="t" id="t13" style="left:200.72px;top:101.66px;font-size:26.52px;color:#ffffff;transform:scaleX(0.8904);">Miyuki's Review Notes&nbsp;&nbsp;-&nbsp;&nbsp;Saved</div>
<div class="t" id="t14" style="left:711.60px;top:101.66px;font-size:26.52px;color:#2f4a3a;transform:scaleX(0.9021);">Search (Alt + Q)</div>
<div class="t" id="t15" style="left:1858.58px;top:104.44px;font-size:23.48px;color:#ffffff;transform:scaleX(1.0233);">MM</div>
<div class="t" id="t16" style="left:38.57px;top:170.48px;font-size:26.38px;color:#252423;transform:scaleX(0.8662);">File</div>
<div class="t" id="t17" style="left:141.06px;top:170.48px;font-size:26.38px;color:#1b1a19;transform:scaleX(0.9677);-webkit-text-stroke:0.55px #1b1a19;">Home</div>
<div class="t" id="t18" style="left:261.66px;top:170.48px;font-size:26.38px;color:#252423;transform:scaleX(0.9205);">Insert</div>
<div class="t" id="t19" style="left:377.17px;top:170.48px;font-size:26.38px;color:#252423;transform:scaleX(0.9174);">Draw</div>
<div class="t" id="t20" style="left:489.22px;top:170.48px;font-size:26.38px;color:#252423;transform:scaleX(0.8890);">Page Layout</div>
<div class="t" id="t21" style="left:676.69px;top:170.48px;font-size:26.38px;color:#252423;transform:scaleX(0.9050);">Formulas</div>
<div class="t" id="t22" style="left:830.71px;top:170.48px;font-size:26.38px;color:#252423;transform:scaleX(0.8974);">Data</div>
<div class="t" id="t23" style="left:935.77px;top:170.48px;font-size:26.38px;color:#252423;transform:scaleX(0.8662);">Review</div>
<div class="t" id="t24" style="left:1066.50px;top:170.48px;font-size:26.38px;color:#252423;transform:scaleX(0.8934);">View</div>
<div class="t" id="t25" style="left:1171.60px;top:170.48px;font-size:26.38px;color:#252423;transform:scaleX(0.9501);">Help</div>
<div class="t" id="t26" style="left:1338.47px;top:174.23px;font-size:26.67px;color:#146b3d;transform:scaleX(0.9672);">Editing</div>
<div class="t" id="t27" style="left:1526.60px;top:175.36px;font-size:24.64px;color:#ffffff;font-weight:bold;transform:scaleX(0.9152);">Share</div>
<div class="t" id="t28" style="left:1696.57px;top:174.23px;font-size:26.67px;color:#146b3d;transform:scaleX(0.9291);">Comments</div>
<div class="t" id="t29" style="left:14.31px;top:356.97px;font-size:17.68px;color:#323130;transform:scaleX(0.9899);">Undo</div>
<div class="t" id="t30" style="left:108.90px;top:356.97px;font-size:17.68px;color:#323130;">Clipboard</div>
<div class="t" id="t31" style="left:97.36px;top:289.32px;font-size:19.86px;color:#323130;transform:scaleX(0.9449);">Paste</div>
<div class="t" id="t32" style="left:418.33px;top:356.97px;font-size:17.68px;color:#323130;transform:scaleX(0.9695);">Font</div>
<div class="t" id="t33" style="left:244.11px;top:250.71px;font-size:21.16px;color:#323130;transform:scaleX(0.9887);">Calibri</div>
<div class="t" id="t34" style="left:467.37px;top:250.71px;font-size:21.16px;color:#323130;transform:scaleX(0.9309);">11</div>
<div class="t" id="t35" style="left:806.00px;top:356.97px;font-size:17.68px;color:#323130;transform:scaleX(1.0042);">Alignment</div>
<div class="t" id="t36" style="left:850.60px;top:249.99px;font-size:20.72px;color:#323130;transform:scaleX(0.9826);">Wrap Text</div>
<div class="t" id="t37" style="left:850.68px;top:299.99px;font-size:20.72px;color:#323130;transform:scaleX(1.0176);">Merge &amp; Center</div>
<div class="t" id="t38" style="left:1136.40px;top:356.97px;font-size:17.68px;color:#323130;transform:scaleX(1.0037);">Number</div>
<div class="t" id="t39" style="left:1063.05px;top:250.71px;font-size:21.16px;color:#323130;transform:scaleX(0.9515);">General</div>
<div class="t" id="t40" style="left:1323.67px;top:292.09px;font-size:20.72px;color:#323130;transform:scaleX(1.0288);">Conditional</div>
<div class="t" id="t41" style="left:1316.18px;top:320.09px;font-size:20.72px;color:#323130;transform:scaleX(1.0205);">Formatting</div>
<div class="t" id="t42" style="left:1446.53px;top:292.09px;font-size:20.72px;color:#323130;transform:scaleX(0.9735);">Format As</div>
<div class="t" id="t43" style="left:1459.70px;top:320.09px;font-size:20.72px;color:#323130;transform:scaleX(0.9243);">Table</div>
<div class="t" id="t44" style="left:1552.50px;top:292.09px;font-size:20.72px;color:#323130;transform:scaleX(0.9133);">Styles</div>
<div class="t" id="t45" style="left:1655.86px;top:292.09px;font-size:20.72px;color:#323130;transform:scaleX(0.9443);">Cells</div>
<div class="t" id="t46" style="left:1746.69px;top:292.09px;font-size:20.72px;color:#323130;transform:scaleX(1.0076);">Editing</div>
<div class="t" id="t47" style="left:1441.00px;top:356.97px;font-size:17.68px;color:#323130;transform:scaleX(0.8946);">Styles</div>
<div class="t" id="t48" style="left:16.27px;top:397.30px;font-size:20.00px;color:#323130;transform:scaleX(0.9285);">B13</div>
<div class="t" id="t49" style="left:110.75px;top:443.24px;font-size:22.90px;color:#5f5f5f;">A</div>
<div class="t" id="t50" style="left:222.75px;top:443.12px;font-size:23.04px;color:#1d6f42;font-weight:bold;">B</div>
<div class="t" id="t51" style="left:349.00px;top:443.24px;font-size:22.90px;color:#5f5f5f;">C</div>
<div class="t" id="t52" style="left:475.00px;top:443.24px;font-size:22.90px;color:#5f5f5f;">D</div>
<div class="t" id="t53" style="left:587.50px;top:443.24px;font-size:22.90px;color:#5f5f5f;">E</div>
<div class="t" id="t54" style="left:700.00px;top:443.24px;font-size:22.90px;color:#5f5f5f;">F</div>
<div class="t" id="t55" style="left:822.00px;top:443.24px;font-size:22.90px;color:#5f5f5f;">G</div>
<div class="t" id="t56" style="left:954.50px;top:443.24px;font-size:22.90px;color:#5f5f5f;">H</div>
<div class="t" id="t57" style="left:1079.00px;top:443.24px;font-size:22.90px;color:#5f5f5f;">I</div>
<div class="t" id="t58" style="left:1189.50px;top:443.24px;font-size:22.90px;color:#5f5f5f;">J</div>
<div class="t" id="t59" style="left:1298.00px;top:443.24px;font-size:22.90px;color:#5f5f5f;">K</div>
<div class="t" id="t60" style="left:1411.75px;top:443.24px;font-size:22.90px;color:#5f5f5f;">L</div>
<div class="t" id="t61" style="left:1520.50px;top:443.24px;font-size:22.90px;color:#5f5f5f;">M</div>
<div class="t" id="t62" style="left:1634.25px;top:443.24px;font-size:22.90px;color:#5f5f5f;">N</div>
<div class="t" id="t63" style="left:1745.50px;top:443.24px;font-size:22.90px;color:#5f5f5f;">O</div>
<div class="t" id="t64" style="left:1858.50px;top:443.24px;font-size:22.90px;color:#5f5f5f;">P</div>
<div class="t" id="t65" style="left:24.00px;top:471.04px;font-size:22.90px;color:#5f5f5f;">1</div>
<div class="t" id="t66" style="left:24.00px;top:507.04px;font-size:22.90px;color:#5f5f5f;">2</div>
<div class="t" id="t67" style="left:24.50px;top:542.03px;font-size:22.90px;color:#5f5f5f;">3</div>
<div class="t" id="t68" style="left:24.00px;top:577.03px;font-size:22.90px;color:#5f5f5f;">4</div>
<div class="t" id="t69" style="left:24.50px;top:612.03px;font-size:22.90px;color:#5f5f5f;">5</div>
<div class="t" id="t70" style="left:24.00px;top:647.03px;font-size:22.90px;color:#5f5f5f;">6</div>
<div class="t" id="t71" style="left:24.00px;top:682.03px;font-size:22.90px;color:#5f5f5f;">7</div>
<div class="t" id="t72" style="left:24.00px;top:717.03px;font-size:22.90px;color:#5f5f5f;">8</div>
<div class="t" id="t73" style="left:24.00px;top:752.03px;font-size:22.90px;color:#5f5f5f;">9</div>
<div class="t" id="t74" style="left:17.63px;top:787.03px;font-size:22.90px;color:#5f5f5f;">10</div>
<div class="t" id="t75" style="left:18.48px;top:822.03px;font-size:22.90px;color:#5f5f5f;">11</div>
<div class="t" id="t76" style="left:17.63px;top:857.03px;font-size:22.90px;color:#5f5f5f;">12</div>
<div class="t" id="t77" style="left:17.63px;top:892.03px;font-size:22.90px;color:#1d6f42;font-weight:bold;">13</div>
<div class="t" id="t78" style="left:67.87px;top:471.41px;font-size:22.46px;color:#000000;transform:scaleX(1.0277);">Notes Date</div>
<div class="t" id="t79" style="left:299.50px;top:471.41px;font-size:22.46px;color:#000000;transform:scaleX(1.0984);">10/19/2022</div>
<div class="t" id="t80" style="left:67.88px;top:506.91px;font-size:22.46px;color:#000000;transform:scaleX(1.0203);">Reviewer</div>
<div class="t" id="t81" style="left:292.61px;top:506.91px;font-size:22.46px;color:#000000;transform:scaleX(1.0871);">Miyuki</div>
<div class="t" id="t82" style="left:773.95px;top:542.11px;font-size:22.46px;color:#000000;transform:scaleX(1.0505);">Completed</div>
<div class="t" id="t83" style="left:819.71px;top:577.11px;font-size:22.46px;color:#000000;transform:scaleX(0.8931);">By</div>
<div class="t" id="t84" style="left:938.99px;top:577.11px;font-size:22.46px;color:#000000;transform:scaleX(1.0078);">Date</div>
<div class="t" id="t85" style="left:393.20px;top:646.41px;font-size:22.46px;color:#000000;transform:scaleX(1.0680);">code in Vendor Information&gt;</div>
<div class="t" id="t86" style="left:407.90px;top:681.41px;font-size:22.46px;color:#000000;transform:scaleX(1.0358);">vendor is approved</div>
<div class="t" id="t87" style="left:413.30px;top:786.61px;font-size:22.46px;color:#000000;transform:scaleX(1.0632);">tions listed under "Credit" Column</div>
<div class="t" id="t88" style="left:381.42px;top:821.29px;font-size:22.60px;color:#000000;">Revenue</div>
<div class="t" id="t89" style="left:378.07px;top:855.79px;font-size:22.60px;color:#000000;">properly</div>
<div class="t" id="t90" style="left:192.15px;top:956.62px;font-size:26.09px;color:#444342;transform:scaleX(0.9230);">Review Note Template</div>
<div class="t" id="t91" style="left:475.61px;top:956.62px;font-size:26.09px;color:#444342;transform:scaleX(0.8873);">Sheet1</div>
<div class="t" id="t92" style="left:585.17px;top:956.62px;font-size:26.09px;color:#444342;transform:scaleX(0.9162);">Koener</div>
<div class="t" id="t93" style="left:698.03px;top:956.62px;font-size:26.09px;color:#3b3a39;transform:scaleX(0.9854);-webkit-text-stroke:0.45px #3b3a39;">MR Auto</div>
<div class="t" id="t94" style="left:832.18px;top:956.62px;font-size:26.09px;color:#444342;transform:scaleX(0.9088);">Haynes</div>
<div class="t" id="t95" style="left:950.50px;top:956.62px;font-size:26.09px;color:#444342;transform:scaleX(0.9107);">Trophy</div>
<div class="t" id="t96" style="left:1061.57px;top:956.62px;font-size:26.09px;color:#444342;transform:scaleX(0.9643);">Northwest</div>
<div class="t" id="t97" style="left:1214.73px;top:956.62px;font-size:26.09px;color:#444342;transform:scaleX(0.8847);">Easel Art</div>
<div class="t" id="t98" style="left:1347.00px;top:956.70px;font-size:26.00px;color:#444342;width:63px;overflow:hidden;">Monte</div>
<div class="t" id="t99" style="left:23.95px;top:1015.30px;font-size:20.00px;color:#484644;transform:scaleX(1.0549);">Calculation Mode: Automatic</div>
<div class="t" id="t100" style="left:325.00px;top:1015.30px;font-size:20.00px;color:#484644;transform:scaleX(1.0357);">Workbook Statistics</div>
<div class="t" id="t101" style="left:1444.96px;top:1015.30px;font-size:20.00px;color:#484644;transform:scaleX(1.0417);">Give Feedback to Microsoft</div>
<div class="t" id="t102" style="left:1807.01px;top:1015.30px;font-size:20.00px;color:#484644;transform:scaleX(0.9927);">100%</div>
<div class="t" id="t103" style="left:88.30px;top:1053.50px;font-size:16.23px;color:#3a3a3a;transform:scaleX(0.8937);">Type here to search</div>
<div class="t" id="t104" style="left:1549.90px;top:1054.86px;font-size:14.64px;color:#ffffff;transform:scaleX(0.8709);">41°F</div>
<div class="t" id="t105" style="left:1585.44px;top:1054.86px;font-size:14.64px;color:#ffffff;transform:scaleX(0.9644);">Mostly clear</div>
<div class="t" id="t106" style="left:1772.11px;top:1054.06px;font-size:12.75px;color:#ffffff;transform:scaleX(0.8868);">ENG</div>
<div class="t" id="t107" style="left:1814.40px;top:1044.98px;font-size:12.61px;color:#ffffff;transform:scaleX(0.8955);">8:52 PM</div>
<div class="t" id="t108" style="left:1806.20px;top:1062.10px;font-size:14.35px;color:#ffffff;transform:scaleX(0.7993);">10/19/2022</div>
<div class="t" id="t109" style="left:82.47px;top:530.06px;font-size:24.64px;color:#ffffff;transform:scaleX(0.9637);z-index:22;">Record</div>
<div class="t" id="t110" style="left:103.10px;top:662.62px;font-size:17.39px;color:#f2f2f2;transform:scaleX(0.9689);z-index:22;">Screen</div>
<div class="t" id="t111" style="left:208.00px;top:662.62px;font-size:17.39px;color:#8b8f93;transform:scaleX(0.9710);z-index:22;">Webcam</div>
<div class="t" id="t112" style="left:331.35px;top:662.62px;font-size:17.39px;color:#8b8f93;transform:scaleX(0.9537);z-index:22;">Both</div>
<div class="t" id="t113" style="left:91.11px;top:723.34px;font-size:17.83px;color:#a7abaf;transform:scaleX(0.8934);z-index:22;">Max Time</div>
<div class="t" id="t114" style="left:312.10px;top:723.34px;font-size:17.83px;color:#e6e6e6;transform:scaleX(0.8992);z-index:22;">None</div>
<div class="t" id="t115" style="left:92.00px;top:767.14px;font-size:17.83px;color:#a7abaf;transform:scaleX(0.9147);z-index:22;">Size</div>
<div class="t" id="t116" style="left:208.36px;top:767.14px;font-size:17.83px;color:#e6e6e6;transform:scaleX(0.9363);z-index:22;">Fullscreen&nbsp;&nbsp;(1080p)</div>
<div class="t" id="t117" style="left:91.06px;top:809.14px;font-size:17.83px;color:#a7abaf;transform:scaleX(0.9355);z-index:22;">Narration</div>
<div class="t" id="t118" style="left:92.00px;top:852.64px;font-size:17.83px;color:#a7abaf;transform:scaleX(0.9099);z-index:22;">Computer Audio</div>
<div class="t" id="t119" style="left:184.55px;top:907.84px;font-size:17.83px;color:#a7abaf;transform:scaleX(0.9475);z-index:22;">Preferences...</div>
<div class="t" id="t120" style="left:42.99px;top:987.80px;font-size:16.23px;color:#ffffff;font-weight:bold;transform:scaleX(1.0093);z-index:31;">Rec</div>
<div class="t" id="t121" style="left:162.50px;top:987.80px;font-size:16.23px;color:#d5d9de;font-weight:bold;transform:scaleX(0.9871);z-index:31;">Cancel</div>
<div class="t" id="t122" style="left:248.16px;top:293.80px;font-size:24.35px;color:#323130;font-weight:bold;transform:scaleX(0.8438);">B</div>
<div class="t" id="t123" style="left:411.00px;top:297.25px;font-size:20.29px;color:#323130;transform:scaleX(1.1221);">ab</div>
<div class="t" id="t124" style="left:819.50px;top:243.62px;font-size:17.50px;color:#323130;transform:scaleX(0.9876);">ab</div>
<div class="t" id="t125" style="left:819.50px;top:255.78px;font-size:18.50px;color:#323130;transform:scaleX(0.8333);">c</div>
<div class="t" id="t126" style="left:1068.00px;top:294.55px;font-size:27.00px;color:#323130;transform:scaleX(0.8667);">$</div>
<div class="t" id="t127" style="left:1122.00px;top:296.55px;font-size:27.00px;color:#323130;transform:scaleX(1.1042);">%</div>
<div class="t" id="t128" style="left:355.00px;top:389.40px;font-size:26.00px;color:#323130;font-family:'Liberation Serif',serif;font-style:italic;transform:scaleX(1.0664);">fx</div>
</body></html>
